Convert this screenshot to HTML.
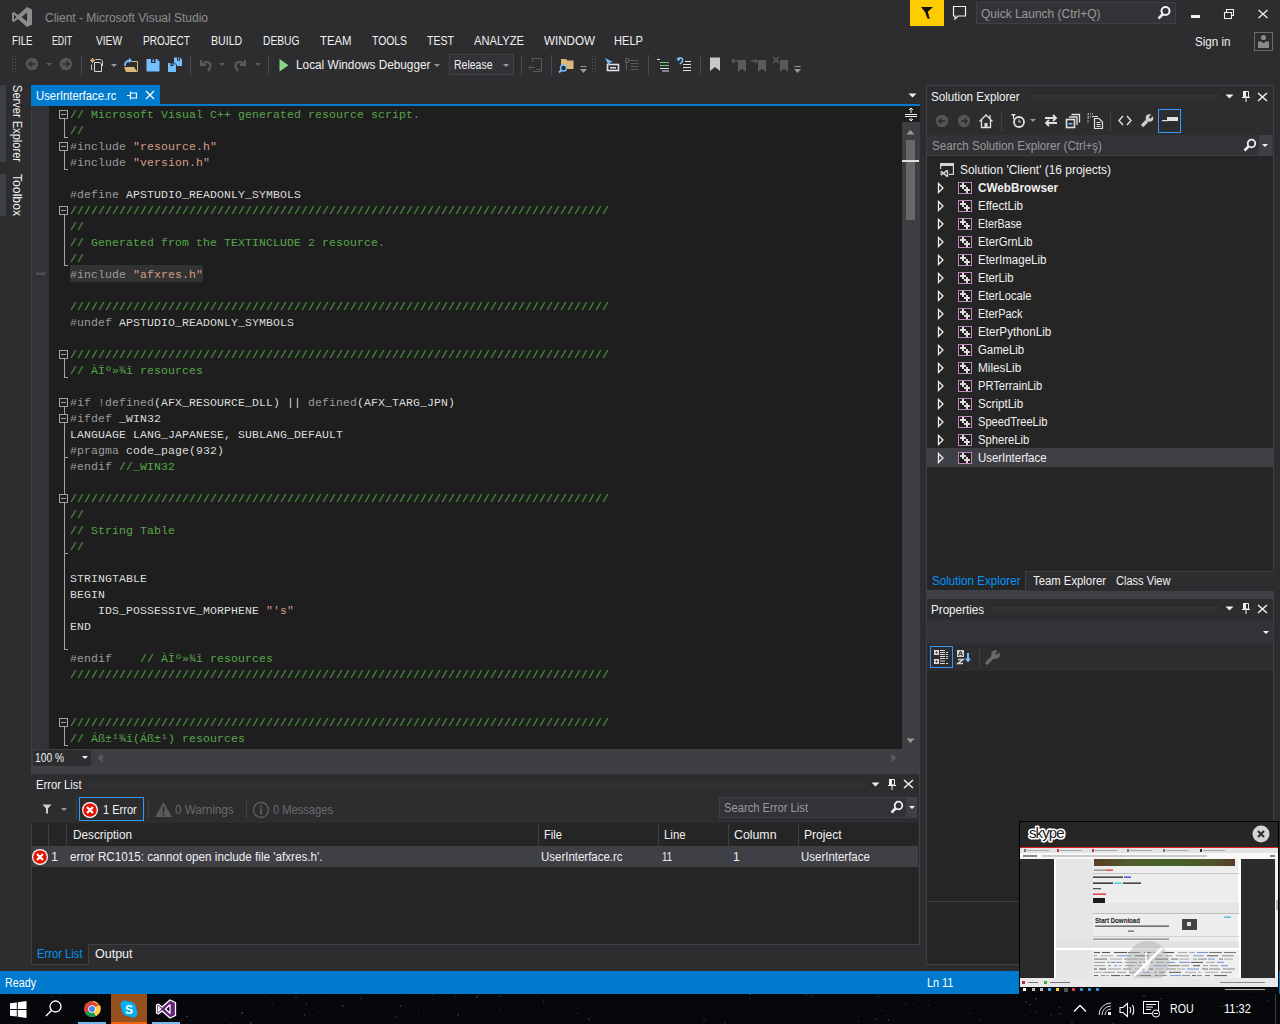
<!DOCTYPE html>
<html><head><meta charset="utf-8">
<style>
*{margin:0;padding:0;box-sizing:border-box}
html,body{width:1280px;height:1024px;overflow:hidden;background:#2d2d30;font-family:"Liberation Sans",sans-serif;font-size:12px;color:#f1f1f1;position:relative}
.a{position:absolute;display:block}
.t{position:absolute;white-space:pre;line-height:1;transform-origin:0 0}
.cl{position:absolute;left:70px;white-space:pre;font-family:"Liberation Mono",monospace;font-size:11.5px;letter-spacing:0.1px;line-height:16px;color:#dcdcdc;height:16px}
.c{color:#57a64a}.p{color:#9b9b9b}.s{color:#d69d85}
</style></head><body>
<svg class="a" style="left:11px;top:6px" width="22" height="22" viewBox="0 0 22 22"><path d="M16 1 L21 3.5 V18.5 L16 21 L7 13 L3 16 L1 15 V7 L3 6 L7 9 Z M16 6.5 L10.5 11 L16 15.5 Z M3 8.5 V13.5 L5.5 11 Z" fill="#8c8c8c" fill-rule="evenodd"/></svg>
<div class="t" style="left:44.50px;top:11.84px;font-size:12px;color:#8e8e8e;transform:scaleX(0.9989)">Client - Microsoft Visual Studio</div>
<div class="a" style="left:910px;top:0px;width:34px;height:26px;background:#ffcc00"></div>
<svg class="a" style="left:918px;top:4px" width="18" height="18" viewBox="918 4 18 18"><path d="M921 7 H933 L927.8 11.8 L929.8 19 L927.3 18.3 L925.2 12.2 Z" fill="#111"/></svg>
<svg class="a" style="left:951px;top:5px" width="17" height="16" viewBox="0 0 17 16"><path d="M2.5 1.5 H14.5 V11 H7 L4 14 V11 H2.5 Z" fill="none" stroke="#f1f1f1" stroke-width="1.2"/></svg>
<div class="a" style="left:976px;top:2px;width:200px;height:22px;background:#333337;border:1px solid #3f3f46"></div>
<div class="t" style="left:981.00px;top:8.34px;font-size:12px;color:#999999;transform:scaleX(0.9983)">Quick Launch (Ctrl+Q)</div>
<svg class="a" style="left:1156px;top:5px" width="16" height="16" viewBox="0 0 16 16"><circle cx="9.5" cy="6" r="4" fill="none" stroke="#f1f1f1" stroke-width="2"/><path d="M7 9 L2.5 13.5" stroke="#f1f1f1" stroke-width="2.5"/></svg>
<div class="a" style="left:1191px;top:15px;width:9px;height:3px;background:#f1f1f1"></div>
<svg class="a" style="left:1222px;top:7px" width="14" height="14" viewBox="1222 7 14 14"><path d="M1224.5 12.5 H1231.5 V18.5 H1224.5 Z M1226.5 12.5 V9.5 H1233.5 V15.5 H1231.5" fill="none" stroke="#f1f1f1" stroke-width="1.1"/></svg>
<svg class="a" style="left:1256px;top:8px" width="14" height="12" viewBox="1256 8 14 12"><path d="M1258.5 10 L1267.5 18 M1267.5 10 L1258.5 18" stroke="#f1f1f1" stroke-width="1.3"/></svg>
<div class="t" style="left:1195.00px;top:36.34px;font-size:12px;color:#f1f1f1;transform:scaleX(0.9675)">Sign in</div>
<svg class="a" style="left:1254px;top:32px" width="19" height="19" viewBox="1254 32 19 19"><rect x="1254.5" y="32.5" width="18" height="18" fill="none" stroke="#6b6b6b"/><circle cx="1263.5" cy="37.5" r="2.6" fill="#8a8a8a"/><path d="M1258 41.5 H1261.5 L1263.5 43.5 L1265.5 41.5 H1269 V48 H1258 Z" fill="#8a8a8a"/></svg>
<div class="t" style="left:11.50px;top:34.84px;font-size:12px;color:#f1f1f1;transform:scaleX(0.8089)">FILE</div>
<div class="t" style="left:52.00px;top:34.84px;font-size:12px;color:#f1f1f1;transform:scaleX(0.7317)">EDIT</div>
<div class="t" style="left:96.00px;top:34.84px;font-size:12px;color:#f1f1f1;transform:scaleX(0.8478)">VIEW</div>
<div class="t" style="left:143.00px;top:34.84px;font-size:12px;color:#f1f1f1;transform:scaleX(0.8392)">PROJECT</div>
<div class="t" style="left:211.30px;top:34.84px;font-size:12px;color:#f1f1f1;transform:scaleX(0.8827)">BUILD</div>
<div class="t" style="left:263.30px;top:34.84px;font-size:12px;color:#f1f1f1;transform:scaleX(0.8530)">DEBUG</div>
<div class="t" style="left:320.30px;top:34.84px;font-size:12px;color:#f1f1f1;transform:scaleX(0.9479)">TEAM</div>
<div class="t" style="left:372.00px;top:34.84px;font-size:12px;color:#f1f1f1;transform:scaleX(0.8651)">TOOLS</div>
<div class="t" style="left:427.00px;top:34.84px;font-size:12px;color:#f1f1f1;transform:scaleX(0.8804)">TEST</div>
<div class="t" style="left:474.00px;top:34.84px;font-size:12px;color:#f1f1f1;transform:scaleX(0.9294)">ANALYZE</div>
<div class="t" style="left:544.00px;top:34.84px;font-size:12px;color:#f1f1f1;transform:scaleX(0.9686)">WINDOW</div>
<div class="t" style="left:614.00px;top:34.84px;font-size:12px;color:#f1f1f1;transform:scaleX(0.9251)">HELP</div>
<svg class="a" style="left:12px;top:56px" width="4" height="18" viewBox="0 0 4 18"><rect x="0" y="0" width="1" height="1" fill="#555"/><rect x="0" y="3" width="1" height="1" fill="#555"/><rect x="0" y="6" width="1" height="1" fill="#555"/><rect x="0" y="9" width="1" height="1" fill="#555"/><rect x="0" y="12" width="1" height="1" fill="#555"/><rect x="0" y="15" width="1" height="1" fill="#555"/><rect x="3" y="0" width="1" height="1" fill="#555"/><rect x="3" y="3" width="1" height="1" fill="#555"/><rect x="3" y="6" width="1" height="1" fill="#555"/><rect x="3" y="9" width="1" height="1" fill="#555"/><rect x="3" y="12" width="1" height="1" fill="#555"/><rect x="3" y="15" width="1" height="1" fill="#555"/></svg>
<svg class="a" style="left:24px;top:56px" width="18" height="18" viewBox="0 0 18 18"><circle cx="8" cy="8" r="6.3" fill="#555558"/><path d="M11 8 H5 M7.5 5.5 L5 8 L7.5 10.5" stroke="#2d2d30" stroke-width="1.6" fill="none"/></svg>
<svg class="a" style="left:46px;top:63px" width="7" height="4" viewBox="0 0 7 4"><path d="M0 0 H6 L3 3 Z" fill="#5a5a5a"/></svg>
<svg class="a" style="left:58px;top:56px" width="18" height="18" viewBox="0 0 18 18"><circle cx="8" cy="8" r="6.3" fill="#555558"/><path d="M5 8 H11 M8.5 5.5 L11 8 L8.5 10.5" stroke="#2d2d30" stroke-width="1.6" fill="none"/></svg>
<div class="a" style="left:81px;top:55px;width:1px;height:20px;background:#4a4a4f"></div>
<svg class="a" style="left:88px;top:56px" width="17" height="18" viewBox="88 56 17 18"><path d="M95.5 59.5 H101 L102.5 61 V66" fill="none" stroke="#c8c8c8"/><path d="M94.5 62.5 H100 L101.5 64 V71.5 H94.5 Z" fill="#2d2d30" stroke="#d8d8d8"/><path d="M91.5 64.5 V69.5 H92.5" fill="none" stroke="#c8c8c8"/><path d="M92.5 58 V63 M90 60.5 H95 M90.7 58.7 L94.3 62.3 M94.3 58.7 L90.7 62.3" stroke="#e8b06b" stroke-width="0.9"/></svg>
<svg class="a" style="left:111px;top:64px" width="7" height="4" viewBox="0 0 7 4"><path d="M0 0 H6 L3 3 Z" fill="#999"/></svg>
<svg class="a" style="left:123px;top:57px" width="17" height="17" viewBox="123 57 17 17"><path d="M131.5 61.5 H137.5 V71.5" fill="none" stroke="#dcb67a"/><path d="M124 67 H134 L137.5 72 H126 Z" fill="#dcb67a"/><path d="M125 66 V65 Q125 61 130 60.5" fill="none" stroke="#75beff" stroke-width="1.8"/><path d="M129 57.8 L132 60.5 L129 63.2 Z" fill="#75beff"/></svg>
<svg class="a" style="left:146px;top:58px" width="14" height="14" viewBox="146 58 14 14"><path d="M146.5 59 H157 L159.5 61.5 V71.5 H146.5 Z" fill="#75beff"/><rect x="151" y="59" width="4.5" height="4" fill="#2d2d30"/><rect x="152.5" y="59.5" width="1.5" height="2.5" fill="#75beff"/></svg>
<svg class="a" style="left:167px;top:57px" width="16" height="16" viewBox="167 57 16 16"><path d="M174 57.5 H180 L182 59.5 V66 H174 Z" fill="#75beff"/><rect x="177" y="57.5" width="3" height="3" fill="#2d2d30"/><rect x="178" y="58" width="1" height="1.5" fill="#75beff"/><path d="M167.5 62.5 H174 L176.5 65 V72.5 H167.5 Z" fill="#75beff" stroke="#2d2d30" stroke-width="1"/><rect x="170.5" y="63" width="3" height="3" fill="#2d2d30"/><rect x="171.5" y="63.5" width="1" height="1.5" fill="#75beff"/></svg>
<div class="a" style="left:190px;top:55px;width:1px;height:20px;background:#4a4a4f"></div>
<svg class="a" style="left:197px;top:57px" width="16" height="16" viewBox="0 0 16 16"><path d="M4 3 V8 H9" fill="none" stroke="#5a5a5a" stroke-width="2"/><path d="M5 7.5 Q9 3 12.5 6 Q15 9 11 14" fill="none" stroke="#5a5a5a" stroke-width="2.2"/></svg>
<svg class="a" style="left:219px;top:63px" width="7" height="4" viewBox="0 0 7 4"><path d="M0 0 H6 L3 3 Z" fill="#5a5a5a"/></svg>
<svg class="a" style="left:233px;top:57px" width="16" height="16" viewBox="0 0 16 16"><path d="M12 3 V8 H7" fill="none" stroke="#5a5a5a" stroke-width="2"/><path d="M11 7.5 Q7 3 3.5 6 Q1 9 5 14" fill="none" stroke="#5a5a5a" stroke-width="2.2"/></svg>
<svg class="a" style="left:255px;top:63px" width="7" height="4" viewBox="0 0 7 4"><path d="M0 0 H6 L3 3 Z" fill="#5a5a5a"/></svg>
<div class="a" style="left:268px;top:55px;width:1px;height:20px;background:#4a4a4f"></div>
<svg class="a" style="left:279px;top:59px" width="10" height="13" viewBox="0 0 10 13"><path d="M0.5 0 L9.5 6.2 L0.5 12.5 Z" fill="#8cd68a"/></svg>
<div class="t" style="left:296.40px;top:59.14px;font-size:12px;color:#f1f1f1;transform:scaleX(0.9836)">Local Windows Debugger</div>
<svg class="a" style="left:434px;top:64px" width="7" height="4" viewBox="0 0 7 4"><path d="M0 0 H6 L3 3 Z" fill="#999"/></svg>
<div class="a" style="left:449px;top:54px;width:65px;height:21px;background:#333337;border:1px solid #434346"></div>
<div class="t" style="left:453.50px;top:59.14px;font-size:12px;color:#f1f1f1;transform:scaleX(0.8744)">Release</div>
<svg class="a" style="left:503px;top:64px" width="7" height="4" viewBox="0 0 7 4"><path d="M0 0 H6 L3 3 Z" fill="#999"/></svg>
<div class="a" style="left:521px;top:55px;width:1px;height:20px;background:#4a4a4f"></div>
<svg class="a" style="left:528px;top:57px" width="15" height="16" viewBox="0 0 15 16"><path d="M4.5 1.5 H13.5 V14.5 H4.5 M4.5 1.5 V5" fill="none" stroke="#5a5a5a"/><path d="M1 10.5 H7 M3 8.5 L1 10.5 L3 12.5 M8 12.5 H12" stroke="#5a5a5a" fill="none"/></svg>
<div class="a" style="left:551px;top:55px;width:1px;height:20px;background:#4a4a4f"></div>
<svg class="a" style="left:558px;top:57px" width="17" height="17" viewBox="0 0 17 17"><path d="M3 2 H8 L9.5 3.5 H15.5 V12 H3 Z" fill="#dcb67a"/><circle cx="5.5" cy="11" r="3" fill="#2d2d30" stroke="#75beff" stroke-width="1.4"/><path d="M3.5 13 L1 15.5" stroke="#75beff" stroke-width="1.8"/></svg>
<svg class="a" style="left:580px;top:66px" width="8" height="9" viewBox="0 0 8 9"><path d="M0.5 0.5 H6.5" stroke="#999"/><path d="M0 3 H7 L3.5 7 Z" fill="#999"/></svg>
<svg class="a" style="left:592px;top:56px" width="4" height="18" viewBox="0 0 4 18"><rect x="0" y="0" width="1" height="1" fill="#555"/><rect x="0" y="3" width="1" height="1" fill="#555"/><rect x="0" y="6" width="1" height="1" fill="#555"/><rect x="0" y="9" width="1" height="1" fill="#555"/><rect x="0" y="12" width="1" height="1" fill="#555"/><rect x="0" y="15" width="1" height="1" fill="#555"/><rect x="3" y="0" width="1" height="1" fill="#555"/><rect x="3" y="3" width="1" height="1" fill="#555"/><rect x="3" y="6" width="1" height="1" fill="#555"/><rect x="3" y="9" width="1" height="1" fill="#555"/><rect x="3" y="12" width="1" height="1" fill="#555"/><rect x="3" y="15" width="1" height="1" fill="#555"/></svg>
<svg class="a" style="left:604px;top:57px" width="16" height="16" viewBox="0 0 16 16"><rect x="3.5" y="7.5" width="11" height="6" fill="none" stroke="#e0e0e0" stroke-width="1.6"/><rect x="6" y="10" width="6" height="1.5" fill="#e0e0e0"/><path d="M1 1 L5 9 L6 5.5 L9 5 Z" fill="#75beff"/></svg>
<svg class="a" style="left:625px;top:57px" width="16" height="16" viewBox="0 0 16 16"><path d="M3.5 3.5 H13.5 M5.5 6.5 H13.5 M5.5 9.5 H13.5 M5.5 12.5 H13.5 M1.5 3.5 V13.5" stroke="#5a5a5a" fill="none"/><rect x="0.5" y="1.5" width="3" height="4" fill="none" stroke="#5a5a5a"/></svg>
<div class="a" style="left:648px;top:55px;width:1px;height:20px;background:#4a4a4f"></div>
<svg class="a" style="left:656px;top:57px" width="14" height="15" viewBox="0 0 14 15"><path d="M1 2.5 H4 M4 5.5 H13 M4 8.5 H13 M4 11.5 H13 M6 14 H13" stroke="#e0e0e0" fill="none"/><path d="M5 5.5 H13 M5 8.5 H13" stroke="#6cc466" fill="none"/></svg>
<svg class="a" style="left:676px;top:57px" width="17" height="16" viewBox="0 0 17 16"><path d="M2 3 Q2 0.5 5 1 Q7.5 1.5 6 5 L4 7" fill="none" stroke="#75beff" stroke-width="1.6"/><path d="M1 1 L2.5 4 L4 1" fill="#75beff" stroke="#75beff"/><path d="M7 7.5 H15 M7 10.5 H15 M7 13.5 H15 M9 4.5 H15" stroke="#e0e0e0" fill="none"/></svg>
<div class="a" style="left:700px;top:55px;width:1px;height:20px;background:#4a4a4f"></div>
<svg class="a" style="left:709px;top:57px" width="12" height="15" viewBox="0 0 12 15"><path d="M1 0.5 H11 V14 L6 10 L1 14 Z" fill="#c8c8c8"/></svg>
<svg class="a" style="left:731px;top:57px" width="17" height="16" viewBox="0 0 17 16"><path d="M7 3 H15 V15 L11 11.5 L7 15 Z" fill="#5a5a5a"/><path d="M1 4 H7 M3 2 L1 4 L3 6" stroke="#5a5a5a" fill="none" stroke-width="1.4"/></svg>
<svg class="a" style="left:751px;top:57px" width="17" height="16" viewBox="0 0 17 16"><path d="M7 3 H15 V15 L11 11.5 L7 15 Z" fill="#5a5a5a"/><path d="M0 4 H6 M4 2 L6 4 L4 6" stroke="#5a5a5a" fill="none" stroke-width="1.4"/></svg>
<svg class="a" style="left:772px;top:56px" width="18" height="17" viewBox="0 0 18 17"><path d="M8 4 H16 V16 L12 12.5 L8 16 Z" fill="#5a5a5a"/><path d="M1 1 L7 7 M7 1 L1 7" stroke="#5a5a5a" stroke-width="1.4"/></svg>
<svg class="a" style="left:794px;top:66px" width="8" height="9" viewBox="0 0 8 9"><path d="M0.5 0.5 H6.5" stroke="#999"/><path d="M0 3 H7 L3.5 7 Z" fill="#999"/></svg>
<div class="a" style="left:0px;top:85px;width:6px;height:77px;background:#3f3f46"></div>
<div class="a" style="left:0px;top:174px;width:6px;height:42px;background:#3f3f46"></div>
<div class="t" style="left:11px;top:85px;font-size:12px;color:#f1f1f1;transform-origin:0 0;transform:translate(12px,0) rotate(90deg) scaleX(0.9236)">Server Explorer</div>
<div class="t" style="left:11px;top:174px;font-size:12px;color:#f1f1f1;transform-origin:0 0;transform:translate(12px,0) rotate(90deg) scaleX(1.0154)">Toolbox</div>
<div class="a" style="left:31px;top:85px;width:129px;height:19px;background:#007acc"></div>
<div class="t" style="left:36.00px;top:89.84px;font-size:12px;color:#ffffff;transform:scaleX(0.9431)">UserInterface.rc</div>
<svg class="a" style="left:126px;top:89px" width="12" height="12" viewBox="0 0 12 12"><path d="M1 6.5 H4.5 M4.5 2.5 V10.5" fill="none" stroke="#fff" stroke-width="1.2"/><path d="M4.5 4 H10.5 V9 H4.5" fill="none" stroke="#fff" stroke-width="1.2"/></svg>
<svg class="a" style="left:145px;top:90px" width="10" height="10" viewBox="0 0 10 10"><path d="M1 1 L9 9 M9 1 L1 9" stroke="#fff" stroke-width="1.3"/></svg>
<div class="a" style="left:31px;top:104px;width:889px;height:2px;background:#007acc"></div>
<svg class="a" style="left:908px;top:93px" width="10" height="6" viewBox="0 0 10 6"><path d="M0.5 0.5 H8.5 L4.5 4.5 Z" fill="#f1f1f1"/></svg>
<div class="a" style="left:31px;top:106px;width:18px;height:643px;background:#333337"></div>
<div class="a" style="left:31px;top:106px;width:1px;height:643px;background:#3a3a40"></div>
<div class="a" style="left:49px;top:106px;width:853px;height:643px;background:#1e1e1e"></div>
<div class="a" style="left:902px;top:106px;width:18px;height:643px;background:#3e3e42"></div>
<div class="a" style="left:31px;top:749px;width:889px;height:17px;background:#3e3e42"></div>
<div class="a" style="left:31px;top:766px;width:889px;height:8px;background:#3f3f46"></div>
<div class="a" style="left:70px;top:265px;width:133px;height:17px;background:#333333"></div>
<div class="cl" style="top:106.6px"><span class="c">// Microsoft Visual C++ generated resource script.</span></div>
<div class="cl" style="top:122.6px"><span class="c">//</span></div>
<div class="cl" style="top:138.6px"><span class="p">#include </span><span class="s">"resource.h"</span></div>
<div class="cl" style="top:154.6px"><span class="p">#include </span><span class="s">"version.h"</span></div>
<div class="cl" style="top:186.6px"><span class="p">#define </span>APSTUDIO_READONLY_SYMBOLS</div>
<div class="cl" style="top:202.6px"><span class="c">/////////////////////////////////////////////////////////////////////////////</span></div>
<div class="cl" style="top:218.6px"><span class="c">//</span></div>
<div class="cl" style="top:234.6px"><span class="c">// Generated from the TEXTINCLUDE 2 resource.</span></div>
<div class="cl" style="top:250.6px"><span class="c">//</span></div>
<div class="cl" style="top:266.6px"><span class="p">#include </span><span class="s">"afxres.h"</span></div>
<div class="cl" style="top:298.6px"><span class="c">/////////////////////////////////////////////////////////////////////////////</span></div>
<div class="cl" style="top:314.6px"><span class="p">#undef </span>APSTUDIO_READONLY_SYMBOLS</div>
<div class="cl" style="top:346.6px"><span class="c">/////////////////////////////////////////////////////////////////////////////</span></div>
<div class="cl" style="top:362.6px"><span class="c">// ÀÏº»¾î resources</span></div>
<div class="cl" style="top:394.6px"><span class="p">#if !defined</span>(AFX_RESOURCE_DLL) || <span class="p">defined</span>(AFX_TARG_JPN)</div>
<div class="cl" style="top:410.6px"><span class="p">#ifdef </span>_WIN32</div>
<div class="cl" style="top:426.6px">LANGUAGE LANG_JAPANESE, SUBLANG_DEFAULT</div>
<div class="cl" style="top:442.6px"><span class="p">#pragma </span>code_page(932)</div>
<div class="cl" style="top:458.6px"><span class="p">#endif </span><span class="c">//_WIN32</span></div>
<div class="cl" style="top:490.6px"><span class="c">/////////////////////////////////////////////////////////////////////////////</span></div>
<div class="cl" style="top:506.6px"><span class="c">//</span></div>
<div class="cl" style="top:522.6px"><span class="c">// String Table</span></div>
<div class="cl" style="top:538.6px"><span class="c">//</span></div>
<div class="cl" style="top:570.6px">STRINGTABLE</div>
<div class="cl" style="top:586.6px">BEGIN</div>
<div class="cl" style="top:602.6px">    IDS_POSSESSIVE_MORPHENE <span class="s">"'s"</span></div>
<div class="cl" style="top:618.6px">END</div>
<div class="cl" style="top:650.6px"><span class="p">#endif    </span><span class="c">// ÀÏº»¾î resources</span></div>
<div class="cl" style="top:666.6px"><span class="c">/////////////////////////////////////////////////////////////////////////////</span></div>
<div class="cl" style="top:714.6px"><span class="c">/////////////////////////////////////////////////////////////////////////////</span></div>
<div class="cl" style="top:730.6px"><span class="c">// Áß±¹¾î(Áß±¹) resources</span></div>
<svg class="a" style="left:0;top:0" width="1280" height="1024"><path d="M64.5 119 V137" stroke="#a5a5a5"/><path d="M64 137.5 H68" stroke="#a5a5a5"/><path d="M64.5 151 V169" stroke="#a5a5a5"/><path d="M64 169.5 H68" stroke="#a5a5a5"/><path d="M64.5 215 V265" stroke="#a5a5a5"/><path d="M64 265.5 H68" stroke="#a5a5a5"/><path d="M64.5 359 V377" stroke="#a5a5a5"/><path d="M64 377.5 H68" stroke="#a5a5a5"/><path d="M64.5 407 V649" stroke="#a5a5a5"/><path d="M64 649.5 H68" stroke="#a5a5a5"/><path d="M64.5 423 V457" stroke="#a5a5a5"/><path d="M64 457.5 H68" stroke="#a5a5a5"/><path d="M64.5 503 V553" stroke="#a5a5a5"/><path d="M64 553.5 H68" stroke="#a5a5a5"/><path d="M64.5 727 V745" stroke="#a5a5a5"/><path d="M64 745.5 H68" stroke="#a5a5a5"/><rect x="59.5" y="110.5" width="8" height="8" fill="#1e1e1e" stroke="#a5a5a5"/><path d="M61 114.5 H66" stroke="#a5a5a5"/><rect x="59.5" y="142.5" width="8" height="8" fill="#1e1e1e" stroke="#a5a5a5"/><path d="M61 146.5 H66" stroke="#a5a5a5"/><rect x="59.5" y="206.5" width="8" height="8" fill="#1e1e1e" stroke="#a5a5a5"/><path d="M61 210.5 H66" stroke="#a5a5a5"/><rect x="59.5" y="350.5" width="8" height="8" fill="#1e1e1e" stroke="#a5a5a5"/><path d="M61 354.5 H66" stroke="#a5a5a5"/><rect x="59.5" y="398.5" width="8" height="8" fill="#1e1e1e" stroke="#a5a5a5"/><path d="M61 402.5 H66" stroke="#a5a5a5"/><rect x="59.5" y="414.5" width="8" height="8" fill="#1e1e1e" stroke="#a5a5a5"/><path d="M61 418.5 H66" stroke="#a5a5a5"/><rect x="59.5" y="494.5" width="8" height="8" fill="#1e1e1e" stroke="#a5a5a5"/><path d="M61 498.5 H66" stroke="#a5a5a5"/><rect x="59.5" y="718.5" width="8" height="8" fill="#1e1e1e" stroke="#a5a5a5"/><path d="M61 722.5 H66" stroke="#a5a5a5"/></svg>
<svg class="a" style="left:35px;top:270px" width="12" height="8" viewBox="35 270 12 8"><path d="M36 272.5 H43 V271 L46 273.8 L43 276.5 V275 H36 Z" fill="#4e4e52"/></svg>
<div class="a" style="left:902px;top:106px;width:18px;height:16px;background:#1e1e1e"></div>
<svg class="a" style="left:903px;top:107px" width="16" height="15" viewBox="0 0 16 15"><path d="M2 7.5 H14 M2 9.5 H14" stroke="#f1f1f1"/><path d="M8 1 V6 M8 11 V14 M6 3 L8 1 L10 3 M6 12 L8 14 L10 12" stroke="#f1f1f1" fill="none"/></svg>
<svg class="a" style="left:906px;top:129px" width="10" height="6" viewBox="0 0 10 6"><path d="M0.5 5.5 L4.5 1 L8.5 5.5 Z" fill="#999"/></svg>
<div class="a" style="left:906px;top:140px;width:9px;height:80px;background:#686868"></div>
<div class="a" style="left:902px;top:160px;width:17px;height:2px;background:#e0e0e0"></div>
<svg class="a" style="left:906px;top:738px" width="10" height="6" viewBox="0 0 10 6"><path d="M0.5 0.5 L4.5 5 L8.5 0.5 Z" fill="#999"/></svg>
<div class="a" style="left:33px;top:750px;width:58px;height:16px;background:#2d2d30"></div>
<div class="t" style="left:35.00px;top:751.84px;font-size:12px;color:#f1f1f1;transform:scaleX(0.8523)">100 %</div>
<svg class="a" style="left:82px;top:756px" width="7" height="4" viewBox="0 0 7 4"><path d="M0 0 H6 L3 3 Z" fill="#f1f1f1"/></svg>
<svg class="a" style="left:97px;top:753px" width="6" height="10" viewBox="0 0 6 10"><path d="M5.5 0.5 V9.5 L0.5 5 Z" fill="#5a5a5a"/></svg>
<svg class="a" style="left:891px;top:753px" width="6" height="10" viewBox="0 0 6 10"><path d="M0.5 0.5 V9.5 L5.5 5 Z" fill="#5a5a5a"/></svg>
<div class="a" style="left:31px;top:774px;width:889px;height:197px;background:#2d2d30"></div>
<div class="t" style="left:36.30px;top:778.54px;font-size:12px;color:#f1f1f1;transform:scaleX(0.9348)">Error List</div>
<svg class="a" style="left:90px;top:782px" width="776" height="5" viewBox="0 0 776 5"><rect x="0" y="0" width="1" height="1" fill="#4a4a4e"/><rect x="2" y="2" width="1" height="1" fill="#4a4a4e"/><rect x="0" y="4" width="1" height="1" fill="#4a4a4e"/><rect x="4" y="0" width="1" height="1" fill="#4a4a4e"/><rect x="6" y="2" width="1" height="1" fill="#4a4a4e"/><rect x="4" y="4" width="1" height="1" fill="#4a4a4e"/><rect x="8" y="0" width="1" height="1" fill="#4a4a4e"/><rect x="10" y="2" width="1" height="1" fill="#4a4a4e"/><rect x="8" y="4" width="1" height="1" fill="#4a4a4e"/><rect x="12" y="0" width="1" height="1" fill="#4a4a4e"/><rect x="14" y="2" width="1" height="1" fill="#4a4a4e"/><rect x="12" y="4" width="1" height="1" fill="#4a4a4e"/><rect x="16" y="0" width="1" height="1" fill="#4a4a4e"/><rect x="18" y="2" width="1" height="1" fill="#4a4a4e"/><rect x="16" y="4" width="1" height="1" fill="#4a4a4e"/><rect x="20" y="0" width="1" height="1" fill="#4a4a4e"/><rect x="22" y="2" width="1" height="1" fill="#4a4a4e"/><rect x="20" y="4" width="1" height="1" fill="#4a4a4e"/><rect x="24" y="0" width="1" height="1" fill="#4a4a4e"/><rect x="26" y="2" width="1" height="1" fill="#4a4a4e"/><rect x="24" y="4" width="1" height="1" fill="#4a4a4e"/><rect x="28" y="0" width="1" height="1" fill="#4a4a4e"/><rect x="30" y="2" width="1" height="1" fill="#4a4a4e"/><rect x="28" y="4" width="1" height="1" fill="#4a4a4e"/><rect x="32" y="0" width="1" height="1" fill="#4a4a4e"/><rect x="34" y="2" width="1" height="1" fill="#4a4a4e"/><rect x="32" y="4" width="1" height="1" fill="#4a4a4e"/><rect x="36" y="0" width="1" height="1" fill="#4a4a4e"/><rect x="38" y="2" width="1" height="1" fill="#4a4a4e"/><rect x="36" y="4" width="1" height="1" fill="#4a4a4e"/><rect x="40" y="0" width="1" height="1" fill="#4a4a4e"/><rect x="42" y="2" width="1" height="1" fill="#4a4a4e"/><rect x="40" y="4" width="1" height="1" fill="#4a4a4e"/><rect x="44" y="0" width="1" height="1" fill="#4a4a4e"/><rect x="46" y="2" width="1" height="1" fill="#4a4a4e"/><rect x="44" y="4" width="1" height="1" fill="#4a4a4e"/><rect x="48" y="0" width="1" height="1" fill="#4a4a4e"/><rect x="50" y="2" width="1" height="1" fill="#4a4a4e"/><rect x="48" y="4" width="1" height="1" fill="#4a4a4e"/><rect x="52" y="0" width="1" height="1" fill="#4a4a4e"/><rect x="54" y="2" width="1" height="1" fill="#4a4a4e"/><rect x="52" y="4" width="1" height="1" fill="#4a4a4e"/><rect x="56" y="0" width="1" height="1" fill="#4a4a4e"/><rect x="58" y="2" width="1" height="1" fill="#4a4a4e"/><rect x="56" y="4" width="1" height="1" fill="#4a4a4e"/><rect x="60" y="0" width="1" height="1" fill="#4a4a4e"/><rect x="62" y="2" width="1" height="1" fill="#4a4a4e"/><rect x="60" y="4" width="1" height="1" fill="#4a4a4e"/><rect x="64" y="0" width="1" height="1" fill="#4a4a4e"/><rect x="66" y="2" width="1" height="1" fill="#4a4a4e"/><rect x="64" y="4" width="1" height="1" fill="#4a4a4e"/><rect x="68" y="0" width="1" height="1" fill="#4a4a4e"/><rect x="70" y="2" width="1" height="1" fill="#4a4a4e"/><rect x="68" y="4" width="1" height="1" fill="#4a4a4e"/><rect x="72" y="0" width="1" height="1" fill="#4a4a4e"/><rect x="74" y="2" width="1" height="1" fill="#4a4a4e"/><rect x="72" y="4" width="1" height="1" fill="#4a4a4e"/><rect x="76" y="0" width="1" height="1" fill="#4a4a4e"/><rect x="78" y="2" width="1" height="1" fill="#4a4a4e"/><rect x="76" y="4" width="1" height="1" fill="#4a4a4e"/><rect x="80" y="0" width="1" height="1" fill="#4a4a4e"/><rect x="82" y="2" width="1" height="1" fill="#4a4a4e"/><rect x="80" y="4" width="1" height="1" fill="#4a4a4e"/><rect x="84" y="0" width="1" height="1" fill="#4a4a4e"/><rect x="86" y="2" width="1" height="1" fill="#4a4a4e"/><rect x="84" y="4" width="1" height="1" fill="#4a4a4e"/><rect x="88" y="0" width="1" height="1" fill="#4a4a4e"/><rect x="90" y="2" width="1" height="1" fill="#4a4a4e"/><rect x="88" y="4" width="1" height="1" fill="#4a4a4e"/><rect x="92" y="0" width="1" height="1" fill="#4a4a4e"/><rect x="94" y="2" width="1" height="1" fill="#4a4a4e"/><rect x="92" y="4" width="1" height="1" fill="#4a4a4e"/><rect x="96" y="0" width="1" height="1" fill="#4a4a4e"/><rect x="98" y="2" width="1" height="1" fill="#4a4a4e"/><rect x="96" y="4" width="1" height="1" fill="#4a4a4e"/><rect x="100" y="0" width="1" height="1" fill="#4a4a4e"/><rect x="102" y="2" width="1" height="1" fill="#4a4a4e"/><rect x="100" y="4" width="1" height="1" fill="#4a4a4e"/><rect x="104" y="0" width="1" height="1" fill="#4a4a4e"/><rect x="106" y="2" width="1" height="1" fill="#4a4a4e"/><rect x="104" y="4" width="1" height="1" fill="#4a4a4e"/><rect x="108" y="0" width="1" height="1" fill="#4a4a4e"/><rect x="110" y="2" width="1" height="1" fill="#4a4a4e"/><rect x="108" y="4" width="1" height="1" fill="#4a4a4e"/><rect x="112" y="0" width="1" height="1" fill="#4a4a4e"/><rect x="114" y="2" width="1" height="1" fill="#4a4a4e"/><rect x="112" y="4" width="1" height="1" fill="#4a4a4e"/><rect x="116" y="0" width="1" height="1" fill="#4a4a4e"/><rect x="118" y="2" width="1" height="1" fill="#4a4a4e"/><rect x="116" y="4" width="1" height="1" fill="#4a4a4e"/><rect x="120" y="0" width="1" height="1" fill="#4a4a4e"/><rect x="122" y="2" width="1" height="1" fill="#4a4a4e"/><rect x="120" y="4" width="1" height="1" fill="#4a4a4e"/><rect x="124" y="0" width="1" height="1" fill="#4a4a4e"/><rect x="126" y="2" width="1" height="1" fill="#4a4a4e"/><rect x="124" y="4" width="1" height="1" fill="#4a4a4e"/><rect x="128" y="0" width="1" height="1" fill="#4a4a4e"/><rect x="130" y="2" width="1" height="1" fill="#4a4a4e"/><rect x="128" y="4" width="1" height="1" fill="#4a4a4e"/><rect x="132" y="0" width="1" height="1" fill="#4a4a4e"/><rect x="134" y="2" width="1" height="1" fill="#4a4a4e"/><rect x="132" y="4" width="1" height="1" fill="#4a4a4e"/><rect x="136" y="0" width="1" height="1" fill="#4a4a4e"/><rect x="138" y="2" width="1" height="1" fill="#4a4a4e"/><rect x="136" y="4" width="1" height="1" fill="#4a4a4e"/><rect x="140" y="0" width="1" height="1" fill="#4a4a4e"/><rect x="142" y="2" width="1" height="1" fill="#4a4a4e"/><rect x="140" y="4" width="1" height="1" fill="#4a4a4e"/><rect x="144" y="0" width="1" height="1" fill="#4a4a4e"/><rect x="146" y="2" width="1" height="1" fill="#4a4a4e"/><rect x="144" y="4" width="1" height="1" fill="#4a4a4e"/><rect x="148" y="0" width="1" height="1" fill="#4a4a4e"/><rect x="150" y="2" width="1" height="1" fill="#4a4a4e"/><rect x="148" y="4" width="1" height="1" fill="#4a4a4e"/><rect x="152" y="0" width="1" height="1" fill="#4a4a4e"/><rect x="154" y="2" width="1" height="1" fill="#4a4a4e"/><rect x="152" y="4" width="1" height="1" fill="#4a4a4e"/><rect x="156" y="0" width="1" height="1" fill="#4a4a4e"/><rect x="158" y="2" width="1" height="1" fill="#4a4a4e"/><rect x="156" y="4" width="1" height="1" fill="#4a4a4e"/><rect x="160" y="0" width="1" height="1" fill="#4a4a4e"/><rect x="162" y="2" width="1" height="1" fill="#4a4a4e"/><rect x="160" y="4" width="1" height="1" fill="#4a4a4e"/><rect x="164" y="0" width="1" height="1" fill="#4a4a4e"/><rect x="166" y="2" width="1" height="1" fill="#4a4a4e"/><rect x="164" y="4" width="1" height="1" fill="#4a4a4e"/><rect x="168" y="0" width="1" height="1" fill="#4a4a4e"/><rect x="170" y="2" width="1" height="1" fill="#4a4a4e"/><rect x="168" y="4" width="1" height="1" fill="#4a4a4e"/><rect x="172" y="0" width="1" height="1" fill="#4a4a4e"/><rect x="174" y="2" width="1" height="1" fill="#4a4a4e"/><rect x="172" y="4" width="1" height="1" fill="#4a4a4e"/><rect x="176" y="0" width="1" height="1" fill="#4a4a4e"/><rect x="178" y="2" width="1" height="1" fill="#4a4a4e"/><rect x="176" y="4" width="1" height="1" fill="#4a4a4e"/><rect x="180" y="0" width="1" height="1" fill="#4a4a4e"/><rect x="182" y="2" width="1" height="1" fill="#4a4a4e"/><rect x="180" y="4" width="1" height="1" fill="#4a4a4e"/><rect x="184" y="0" width="1" height="1" fill="#4a4a4e"/><rect x="186" y="2" width="1" height="1" fill="#4a4a4e"/><rect x="184" y="4" width="1" height="1" fill="#4a4a4e"/><rect x="188" y="0" width="1" height="1" fill="#4a4a4e"/><rect x="190" y="2" width="1" height="1" fill="#4a4a4e"/><rect x="188" y="4" width="1" height="1" fill="#4a4a4e"/><rect x="192" y="0" width="1" height="1" fill="#4a4a4e"/><rect x="194" y="2" width="1" height="1" fill="#4a4a4e"/><rect x="192" y="4" width="1" height="1" fill="#4a4a4e"/><rect x="196" y="0" width="1" height="1" fill="#4a4a4e"/><rect x="198" y="2" width="1" height="1" fill="#4a4a4e"/><rect x="196" y="4" width="1" height="1" fill="#4a4a4e"/><rect x="200" y="0" width="1" height="1" fill="#4a4a4e"/><rect x="202" y="2" width="1" height="1" fill="#4a4a4e"/><rect x="200" y="4" width="1" height="1" fill="#4a4a4e"/><rect x="204" y="0" width="1" height="1" fill="#4a4a4e"/><rect x="206" y="2" width="1" height="1" fill="#4a4a4e"/><rect x="204" y="4" width="1" height="1" fill="#4a4a4e"/><rect x="208" y="0" width="1" height="1" fill="#4a4a4e"/><rect x="210" y="2" width="1" height="1" fill="#4a4a4e"/><rect x="208" y="4" width="1" height="1" fill="#4a4a4e"/><rect x="212" y="0" width="1" height="1" fill="#4a4a4e"/><rect x="214" y="2" width="1" height="1" fill="#4a4a4e"/><rect x="212" y="4" width="1" height="1" fill="#4a4a4e"/><rect x="216" y="0" width="1" height="1" fill="#4a4a4e"/><rect x="218" y="2" width="1" height="1" fill="#4a4a4e"/><rect x="216" y="4" width="1" height="1" fill="#4a4a4e"/><rect x="220" y="0" width="1" height="1" fill="#4a4a4e"/><rect x="222" y="2" width="1" height="1" fill="#4a4a4e"/><rect x="220" y="4" width="1" height="1" fill="#4a4a4e"/><rect x="224" y="0" width="1" height="1" fill="#4a4a4e"/><rect x="226" y="2" width="1" height="1" fill="#4a4a4e"/><rect x="224" y="4" width="1" height="1" fill="#4a4a4e"/><rect x="228" y="0" width="1" height="1" fill="#4a4a4e"/><rect x="230" y="2" width="1" height="1" fill="#4a4a4e"/><rect x="228" y="4" width="1" height="1" fill="#4a4a4e"/><rect x="232" y="0" width="1" height="1" fill="#4a4a4e"/><rect x="234" y="2" width="1" height="1" fill="#4a4a4e"/><rect x="232" y="4" width="1" height="1" fill="#4a4a4e"/><rect x="236" y="0" width="1" height="1" fill="#4a4a4e"/><rect x="238" y="2" width="1" height="1" fill="#4a4a4e"/><rect x="236" y="4" width="1" height="1" fill="#4a4a4e"/><rect x="240" y="0" width="1" height="1" fill="#4a4a4e"/><rect x="242" y="2" width="1" height="1" fill="#4a4a4e"/><rect x="240" y="4" width="1" height="1" fill="#4a4a4e"/><rect x="244" y="0" width="1" height="1" fill="#4a4a4e"/><rect x="246" y="2" width="1" height="1" fill="#4a4a4e"/><rect x="244" y="4" width="1" height="1" fill="#4a4a4e"/><rect x="248" y="0" width="1" height="1" fill="#4a4a4e"/><rect x="250" y="2" width="1" height="1" fill="#4a4a4e"/><rect x="248" y="4" width="1" height="1" fill="#4a4a4e"/><rect x="252" y="0" width="1" height="1" fill="#4a4a4e"/><rect x="254" y="2" width="1" height="1" fill="#4a4a4e"/><rect x="252" y="4" width="1" height="1" fill="#4a4a4e"/><rect x="256" y="0" width="1" height="1" fill="#4a4a4e"/><rect x="258" y="2" width="1" height="1" fill="#4a4a4e"/><rect x="256" y="4" width="1" height="1" fill="#4a4a4e"/><rect x="260" y="0" width="1" height="1" fill="#4a4a4e"/><rect x="262" y="2" width="1" height="1" fill="#4a4a4e"/><rect x="260" y="4" width="1" height="1" fill="#4a4a4e"/><rect x="264" y="0" width="1" height="1" fill="#4a4a4e"/><rect x="266" y="2" width="1" height="1" fill="#4a4a4e"/><rect x="264" y="4" width="1" height="1" fill="#4a4a4e"/><rect x="268" y="0" width="1" height="1" fill="#4a4a4e"/><rect x="270" y="2" width="1" height="1" fill="#4a4a4e"/><rect x="268" y="4" width="1" height="1" fill="#4a4a4e"/><rect x="272" y="0" width="1" height="1" fill="#4a4a4e"/><rect x="274" y="2" width="1" height="1" fill="#4a4a4e"/><rect x="272" y="4" width="1" height="1" fill="#4a4a4e"/><rect x="276" y="0" width="1" height="1" fill="#4a4a4e"/><rect x="278" y="2" width="1" height="1" fill="#4a4a4e"/><rect x="276" y="4" width="1" height="1" fill="#4a4a4e"/><rect x="280" y="0" width="1" height="1" fill="#4a4a4e"/><rect x="282" y="2" width="1" height="1" fill="#4a4a4e"/><rect x="280" y="4" width="1" height="1" fill="#4a4a4e"/><rect x="284" y="0" width="1" height="1" fill="#4a4a4e"/><rect x="286" y="2" width="1" height="1" fill="#4a4a4e"/><rect x="284" y="4" width="1" height="1" fill="#4a4a4e"/><rect x="288" y="0" width="1" height="1" fill="#4a4a4e"/><rect x="290" y="2" width="1" height="1" fill="#4a4a4e"/><rect x="288" y="4" width="1" height="1" fill="#4a4a4e"/><rect x="292" y="0" width="1" height="1" fill="#4a4a4e"/><rect x="294" y="2" width="1" height="1" fill="#4a4a4e"/><rect x="292" y="4" width="1" height="1" fill="#4a4a4e"/><rect x="296" y="0" width="1" height="1" fill="#4a4a4e"/><rect x="298" y="2" width="1" height="1" fill="#4a4a4e"/><rect x="296" y="4" width="1" height="1" fill="#4a4a4e"/><rect x="300" y="0" width="1" height="1" fill="#4a4a4e"/><rect x="302" y="2" width="1" height="1" fill="#4a4a4e"/><rect x="300" y="4" width="1" height="1" fill="#4a4a4e"/><rect x="304" y="0" width="1" height="1" fill="#4a4a4e"/><rect x="306" y="2" width="1" height="1" fill="#4a4a4e"/><rect x="304" y="4" width="1" height="1" fill="#4a4a4e"/><rect x="308" y="0" width="1" height="1" fill="#4a4a4e"/><rect x="310" y="2" width="1" height="1" fill="#4a4a4e"/><rect x="308" y="4" width="1" height="1" fill="#4a4a4e"/><rect x="312" y="0" width="1" height="1" fill="#4a4a4e"/><rect x="314" y="2" width="1" height="1" fill="#4a4a4e"/><rect x="312" y="4" width="1" height="1" fill="#4a4a4e"/><rect x="316" y="0" width="1" height="1" fill="#4a4a4e"/><rect x="318" y="2" width="1" height="1" fill="#4a4a4e"/><rect x="316" y="4" width="1" height="1" fill="#4a4a4e"/><rect x="320" y="0" width="1" height="1" fill="#4a4a4e"/><rect x="322" y="2" width="1" height="1" fill="#4a4a4e"/><rect x="320" y="4" width="1" height="1" fill="#4a4a4e"/><rect x="324" y="0" width="1" height="1" fill="#4a4a4e"/><rect x="326" y="2" width="1" height="1" fill="#4a4a4e"/><rect x="324" y="4" width="1" height="1" fill="#4a4a4e"/><rect x="328" y="0" width="1" height="1" fill="#4a4a4e"/><rect x="330" y="2" width="1" height="1" fill="#4a4a4e"/><rect x="328" y="4" width="1" height="1" fill="#4a4a4e"/><rect x="332" y="0" width="1" height="1" fill="#4a4a4e"/><rect x="334" y="2" width="1" height="1" fill="#4a4a4e"/><rect x="332" y="4" width="1" height="1" fill="#4a4a4e"/><rect x="336" y="0" width="1" height="1" fill="#4a4a4e"/><rect x="338" y="2" width="1" height="1" fill="#4a4a4e"/><rect x="336" y="4" width="1" height="1" fill="#4a4a4e"/><rect x="340" y="0" width="1" height="1" fill="#4a4a4e"/><rect x="342" y="2" width="1" height="1" fill="#4a4a4e"/><rect x="340" y="4" width="1" height="1" fill="#4a4a4e"/><rect x="344" y="0" width="1" height="1" fill="#4a4a4e"/><rect x="346" y="2" width="1" height="1" fill="#4a4a4e"/><rect x="344" y="4" width="1" height="1" fill="#4a4a4e"/><rect x="348" y="0" width="1" height="1" fill="#4a4a4e"/><rect x="350" y="2" width="1" height="1" fill="#4a4a4e"/><rect x="348" y="4" width="1" height="1" fill="#4a4a4e"/><rect x="352" y="0" width="1" height="1" fill="#4a4a4e"/><rect x="354" y="2" width="1" height="1" fill="#4a4a4e"/><rect x="352" y="4" width="1" height="1" fill="#4a4a4e"/><rect x="356" y="0" width="1" height="1" fill="#4a4a4e"/><rect x="358" y="2" width="1" height="1" fill="#4a4a4e"/><rect x="356" y="4" width="1" height="1" fill="#4a4a4e"/><rect x="360" y="0" width="1" height="1" fill="#4a4a4e"/><rect x="362" y="2" width="1" height="1" fill="#4a4a4e"/><rect x="360" y="4" width="1" height="1" fill="#4a4a4e"/><rect x="364" y="0" width="1" height="1" fill="#4a4a4e"/><rect x="366" y="2" width="1" height="1" fill="#4a4a4e"/><rect x="364" y="4" width="1" height="1" fill="#4a4a4e"/><rect x="368" y="0" width="1" height="1" fill="#4a4a4e"/><rect x="370" y="2" width="1" height="1" fill="#4a4a4e"/><rect x="368" y="4" width="1" height="1" fill="#4a4a4e"/><rect x="372" y="0" width="1" height="1" fill="#4a4a4e"/><rect x="374" y="2" width="1" height="1" fill="#4a4a4e"/><rect x="372" y="4" width="1" height="1" fill="#4a4a4e"/><rect x="376" y="0" width="1" height="1" fill="#4a4a4e"/><rect x="378" y="2" width="1" height="1" fill="#4a4a4e"/><rect x="376" y="4" width="1" height="1" fill="#4a4a4e"/><rect x="380" y="0" width="1" height="1" fill="#4a4a4e"/><rect x="382" y="2" width="1" height="1" fill="#4a4a4e"/><rect x="380" y="4" width="1" height="1" fill="#4a4a4e"/><rect x="384" y="0" width="1" height="1" fill="#4a4a4e"/><rect x="386" y="2" width="1" height="1" fill="#4a4a4e"/><rect x="384" y="4" width="1" height="1" fill="#4a4a4e"/><rect x="388" y="0" width="1" height="1" fill="#4a4a4e"/><rect x="390" y="2" width="1" height="1" fill="#4a4a4e"/><rect x="388" y="4" width="1" height="1" fill="#4a4a4e"/><rect x="392" y="0" width="1" height="1" fill="#4a4a4e"/><rect x="394" y="2" width="1" height="1" fill="#4a4a4e"/><rect x="392" y="4" width="1" height="1" fill="#4a4a4e"/><rect x="396" y="0" width="1" height="1" fill="#4a4a4e"/><rect x="398" y="2" width="1" height="1" fill="#4a4a4e"/><rect x="396" y="4" width="1" height="1" fill="#4a4a4e"/><rect x="400" y="0" width="1" height="1" fill="#4a4a4e"/><rect x="402" y="2" width="1" height="1" fill="#4a4a4e"/><rect x="400" y="4" width="1" height="1" fill="#4a4a4e"/><rect x="404" y="0" width="1" height="1" fill="#4a4a4e"/><rect x="406" y="2" width="1" height="1" fill="#4a4a4e"/><rect x="404" y="4" width="1" height="1" fill="#4a4a4e"/><rect x="408" y="0" width="1" height="1" fill="#4a4a4e"/><rect x="410" y="2" width="1" height="1" fill="#4a4a4e"/><rect x="408" y="4" width="1" height="1" fill="#4a4a4e"/><rect x="412" y="0" width="1" height="1" fill="#4a4a4e"/><rect x="414" y="2" width="1" height="1" fill="#4a4a4e"/><rect x="412" y="4" width="1" height="1" fill="#4a4a4e"/><rect x="416" y="0" width="1" height="1" fill="#4a4a4e"/><rect x="418" y="2" width="1" height="1" fill="#4a4a4e"/><rect x="416" y="4" width="1" height="1" fill="#4a4a4e"/><rect x="420" y="0" width="1" height="1" fill="#4a4a4e"/><rect x="422" y="2" width="1" height="1" fill="#4a4a4e"/><rect x="420" y="4" width="1" height="1" fill="#4a4a4e"/><rect x="424" y="0" width="1" height="1" fill="#4a4a4e"/><rect x="426" y="2" width="1" height="1" fill="#4a4a4e"/><rect x="424" y="4" width="1" height="1" fill="#4a4a4e"/><rect x="428" y="0" width="1" height="1" fill="#4a4a4e"/><rect x="430" y="2" width="1" height="1" fill="#4a4a4e"/><rect x="428" y="4" width="1" height="1" fill="#4a4a4e"/><rect x="432" y="0" width="1" height="1" fill="#4a4a4e"/><rect x="434" y="2" width="1" height="1" fill="#4a4a4e"/><rect x="432" y="4" width="1" height="1" fill="#4a4a4e"/><rect x="436" y="0" width="1" height="1" fill="#4a4a4e"/><rect x="438" y="2" width="1" height="1" fill="#4a4a4e"/><rect x="436" y="4" width="1" height="1" fill="#4a4a4e"/><rect x="440" y="0" width="1" height="1" fill="#4a4a4e"/><rect x="442" y="2" width="1" height="1" fill="#4a4a4e"/><rect x="440" y="4" width="1" height="1" fill="#4a4a4e"/><rect x="444" y="0" width="1" height="1" fill="#4a4a4e"/><rect x="446" y="2" width="1" height="1" fill="#4a4a4e"/><rect x="444" y="4" width="1" height="1" fill="#4a4a4e"/><rect x="448" y="0" width="1" height="1" fill="#4a4a4e"/><rect x="450" y="2" width="1" height="1" fill="#4a4a4e"/><rect x="448" y="4" width="1" height="1" fill="#4a4a4e"/><rect x="452" y="0" width="1" height="1" fill="#4a4a4e"/><rect x="454" y="2" width="1" height="1" fill="#4a4a4e"/><rect x="452" y="4" width="1" height="1" fill="#4a4a4e"/><rect x="456" y="0" width="1" height="1" fill="#4a4a4e"/><rect x="458" y="2" width="1" height="1" fill="#4a4a4e"/><rect x="456" y="4" width="1" height="1" fill="#4a4a4e"/><rect x="460" y="0" width="1" height="1" fill="#4a4a4e"/><rect x="462" y="2" width="1" height="1" fill="#4a4a4e"/><rect x="460" y="4" width="1" height="1" fill="#4a4a4e"/><rect x="464" y="0" width="1" height="1" fill="#4a4a4e"/><rect x="466" y="2" width="1" height="1" fill="#4a4a4e"/><rect x="464" y="4" width="1" height="1" fill="#4a4a4e"/><rect x="468" y="0" width="1" height="1" fill="#4a4a4e"/><rect x="470" y="2" width="1" height="1" fill="#4a4a4e"/><rect x="468" y="4" width="1" height="1" fill="#4a4a4e"/><rect x="472" y="0" width="1" height="1" fill="#4a4a4e"/><rect x="474" y="2" width="1" height="1" fill="#4a4a4e"/><rect x="472" y="4" width="1" height="1" fill="#4a4a4e"/><rect x="476" y="0" width="1" height="1" fill="#4a4a4e"/><rect x="478" y="2" width="1" height="1" fill="#4a4a4e"/><rect x="476" y="4" width="1" height="1" fill="#4a4a4e"/><rect x="480" y="0" width="1" height="1" fill="#4a4a4e"/><rect x="482" y="2" width="1" height="1" fill="#4a4a4e"/><rect x="480" y="4" width="1" height="1" fill="#4a4a4e"/><rect x="484" y="0" width="1" height="1" fill="#4a4a4e"/><rect x="486" y="2" width="1" height="1" fill="#4a4a4e"/><rect x="484" y="4" width="1" height="1" fill="#4a4a4e"/><rect x="488" y="0" width="1" height="1" fill="#4a4a4e"/><rect x="490" y="2" width="1" height="1" fill="#4a4a4e"/><rect x="488" y="4" width="1" height="1" fill="#4a4a4e"/><rect x="492" y="0" width="1" height="1" fill="#4a4a4e"/><rect x="494" y="2" width="1" height="1" fill="#4a4a4e"/><rect x="492" y="4" width="1" height="1" fill="#4a4a4e"/><rect x="496" y="0" width="1" height="1" fill="#4a4a4e"/><rect x="498" y="2" width="1" height="1" fill="#4a4a4e"/><rect x="496" y="4" width="1" height="1" fill="#4a4a4e"/><rect x="500" y="0" width="1" height="1" fill="#4a4a4e"/><rect x="502" y="2" width="1" height="1" fill="#4a4a4e"/><rect x="500" y="4" width="1" height="1" fill="#4a4a4e"/><rect x="504" y="0" width="1" height="1" fill="#4a4a4e"/><rect x="506" y="2" width="1" height="1" fill="#4a4a4e"/><rect x="504" y="4" width="1" height="1" fill="#4a4a4e"/><rect x="508" y="0" width="1" height="1" fill="#4a4a4e"/><rect x="510" y="2" width="1" height="1" fill="#4a4a4e"/><rect x="508" y="4" width="1" height="1" fill="#4a4a4e"/><rect x="512" y="0" width="1" height="1" fill="#4a4a4e"/><rect x="514" y="2" width="1" height="1" fill="#4a4a4e"/><rect x="512" y="4" width="1" height="1" fill="#4a4a4e"/><rect x="516" y="0" width="1" height="1" fill="#4a4a4e"/><rect x="518" y="2" width="1" height="1" fill="#4a4a4e"/><rect x="516" y="4" width="1" height="1" fill="#4a4a4e"/><rect x="520" y="0" width="1" height="1" fill="#4a4a4e"/><rect x="522" y="2" width="1" height="1" fill="#4a4a4e"/><rect x="520" y="4" width="1" height="1" fill="#4a4a4e"/><rect x="524" y="0" width="1" height="1" fill="#4a4a4e"/><rect x="526" y="2" width="1" height="1" fill="#4a4a4e"/><rect x="524" y="4" width="1" height="1" fill="#4a4a4e"/><rect x="528" y="0" width="1" height="1" fill="#4a4a4e"/><rect x="530" y="2" width="1" height="1" fill="#4a4a4e"/><rect x="528" y="4" width="1" height="1" fill="#4a4a4e"/><rect x="532" y="0" width="1" height="1" fill="#4a4a4e"/><rect x="534" y="2" width="1" height="1" fill="#4a4a4e"/><rect x="532" y="4" width="1" height="1" fill="#4a4a4e"/><rect x="536" y="0" width="1" height="1" fill="#4a4a4e"/><rect x="538" y="2" width="1" height="1" fill="#4a4a4e"/><rect x="536" y="4" width="1" height="1" fill="#4a4a4e"/><rect x="540" y="0" width="1" height="1" fill="#4a4a4e"/><rect x="542" y="2" width="1" height="1" fill="#4a4a4e"/><rect x="540" y="4" width="1" height="1" fill="#4a4a4e"/><rect x="544" y="0" width="1" height="1" fill="#4a4a4e"/><rect x="546" y="2" width="1" height="1" fill="#4a4a4e"/><rect x="544" y="4" width="1" height="1" fill="#4a4a4e"/><rect x="548" y="0" width="1" height="1" fill="#4a4a4e"/><rect x="550" y="2" width="1" height="1" fill="#4a4a4e"/><rect x="548" y="4" width="1" height="1" fill="#4a4a4e"/><rect x="552" y="0" width="1" height="1" fill="#4a4a4e"/><rect x="554" y="2" width="1" height="1" fill="#4a4a4e"/><rect x="552" y="4" width="1" height="1" fill="#4a4a4e"/><rect x="556" y="0" width="1" height="1" fill="#4a4a4e"/><rect x="558" y="2" width="1" height="1" fill="#4a4a4e"/><rect x="556" y="4" width="1" height="1" fill="#4a4a4e"/><rect x="560" y="0" width="1" height="1" fill="#4a4a4e"/><rect x="562" y="2" width="1" height="1" fill="#4a4a4e"/><rect x="560" y="4" width="1" height="1" fill="#4a4a4e"/><rect x="564" y="0" width="1" height="1" fill="#4a4a4e"/><rect x="566" y="2" width="1" height="1" fill="#4a4a4e"/><rect x="564" y="4" width="1" height="1" fill="#4a4a4e"/><rect x="568" y="0" width="1" height="1" fill="#4a4a4e"/><rect x="570" y="2" width="1" height="1" fill="#4a4a4e"/><rect x="568" y="4" width="1" height="1" fill="#4a4a4e"/><rect x="572" y="0" width="1" height="1" fill="#4a4a4e"/><rect x="574" y="2" width="1" height="1" fill="#4a4a4e"/><rect x="572" y="4" width="1" height="1" fill="#4a4a4e"/><rect x="576" y="0" width="1" height="1" fill="#4a4a4e"/><rect x="578" y="2" width="1" height="1" fill="#4a4a4e"/><rect x="576" y="4" width="1" height="1" fill="#4a4a4e"/><rect x="580" y="0" width="1" height="1" fill="#4a4a4e"/><rect x="582" y="2" width="1" height="1" fill="#4a4a4e"/><rect x="580" y="4" width="1" height="1" fill="#4a4a4e"/><rect x="584" y="0" width="1" height="1" fill="#4a4a4e"/><rect x="586" y="2" width="1" height="1" fill="#4a4a4e"/><rect x="584" y="4" width="1" height="1" fill="#4a4a4e"/><rect x="588" y="0" width="1" height="1" fill="#4a4a4e"/><rect x="590" y="2" width="1" height="1" fill="#4a4a4e"/><rect x="588" y="4" width="1" height="1" fill="#4a4a4e"/><rect x="592" y="0" width="1" height="1" fill="#4a4a4e"/><rect x="594" y="2" width="1" height="1" fill="#4a4a4e"/><rect x="592" y="4" width="1" height="1" fill="#4a4a4e"/><rect x="596" y="0" width="1" height="1" fill="#4a4a4e"/><rect x="598" y="2" width="1" height="1" fill="#4a4a4e"/><rect x="596" y="4" width="1" height="1" fill="#4a4a4e"/><rect x="600" y="0" width="1" height="1" fill="#4a4a4e"/><rect x="602" y="2" width="1" height="1" fill="#4a4a4e"/><rect x="600" y="4" width="1" height="1" fill="#4a4a4e"/><rect x="604" y="0" width="1" height="1" fill="#4a4a4e"/><rect x="606" y="2" width="1" height="1" fill="#4a4a4e"/><rect x="604" y="4" width="1" height="1" fill="#4a4a4e"/><rect x="608" y="0" width="1" height="1" fill="#4a4a4e"/><rect x="610" y="2" width="1" height="1" fill="#4a4a4e"/><rect x="608" y="4" width="1" height="1" fill="#4a4a4e"/><rect x="612" y="0" width="1" height="1" fill="#4a4a4e"/><rect x="614" y="2" width="1" height="1" fill="#4a4a4e"/><rect x="612" y="4" width="1" height="1" fill="#4a4a4e"/><rect x="616" y="0" width="1" height="1" fill="#4a4a4e"/><rect x="618" y="2" width="1" height="1" fill="#4a4a4e"/><rect x="616" y="4" width="1" height="1" fill="#4a4a4e"/><rect x="620" y="0" width="1" height="1" fill="#4a4a4e"/><rect x="622" y="2" width="1" height="1" fill="#4a4a4e"/><rect x="620" y="4" width="1" height="1" fill="#4a4a4e"/><rect x="624" y="0" width="1" height="1" fill="#4a4a4e"/><rect x="626" y="2" width="1" height="1" fill="#4a4a4e"/><rect x="624" y="4" width="1" height="1" fill="#4a4a4e"/><rect x="628" y="0" width="1" height="1" fill="#4a4a4e"/><rect x="630" y="2" width="1" height="1" fill="#4a4a4e"/><rect x="628" y="4" width="1" height="1" fill="#4a4a4e"/><rect x="632" y="0" width="1" height="1" fill="#4a4a4e"/><rect x="634" y="2" width="1" height="1" fill="#4a4a4e"/><rect x="632" y="4" width="1" height="1" fill="#4a4a4e"/><rect x="636" y="0" width="1" height="1" fill="#4a4a4e"/><rect x="638" y="2" width="1" height="1" fill="#4a4a4e"/><rect x="636" y="4" width="1" height="1" fill="#4a4a4e"/><rect x="640" y="0" width="1" height="1" fill="#4a4a4e"/><rect x="642" y="2" width="1" height="1" fill="#4a4a4e"/><rect x="640" y="4" width="1" height="1" fill="#4a4a4e"/><rect x="644" y="0" width="1" height="1" fill="#4a4a4e"/><rect x="646" y="2" width="1" height="1" fill="#4a4a4e"/><rect x="644" y="4" width="1" height="1" fill="#4a4a4e"/><rect x="648" y="0" width="1" height="1" fill="#4a4a4e"/><rect x="650" y="2" width="1" height="1" fill="#4a4a4e"/><rect x="648" y="4" width="1" height="1" fill="#4a4a4e"/><rect x="652" y="0" width="1" height="1" fill="#4a4a4e"/><rect x="654" y="2" width="1" height="1" fill="#4a4a4e"/><rect x="652" y="4" width="1" height="1" fill="#4a4a4e"/><rect x="656" y="0" width="1" height="1" fill="#4a4a4e"/><rect x="658" y="2" width="1" height="1" fill="#4a4a4e"/><rect x="656" y="4" width="1" height="1" fill="#4a4a4e"/><rect x="660" y="0" width="1" height="1" fill="#4a4a4e"/><rect x="662" y="2" width="1" height="1" fill="#4a4a4e"/><rect x="660" y="4" width="1" height="1" fill="#4a4a4e"/><rect x="664" y="0" width="1" height="1" fill="#4a4a4e"/><rect x="666" y="2" width="1" height="1" fill="#4a4a4e"/><rect x="664" y="4" width="1" height="1" fill="#4a4a4e"/><rect x="668" y="0" width="1" height="1" fill="#4a4a4e"/><rect x="670" y="2" width="1" height="1" fill="#4a4a4e"/><rect x="668" y="4" width="1" height="1" fill="#4a4a4e"/><rect x="672" y="0" width="1" height="1" fill="#4a4a4e"/><rect x="674" y="2" width="1" height="1" fill="#4a4a4e"/><rect x="672" y="4" width="1" height="1" fill="#4a4a4e"/><rect x="676" y="0" width="1" height="1" fill="#4a4a4e"/><rect x="678" y="2" width="1" height="1" fill="#4a4a4e"/><rect x="676" y="4" width="1" height="1" fill="#4a4a4e"/><rect x="680" y="0" width="1" height="1" fill="#4a4a4e"/><rect x="682" y="2" width="1" height="1" fill="#4a4a4e"/><rect x="680" y="4" width="1" height="1" fill="#4a4a4e"/><rect x="684" y="0" width="1" height="1" fill="#4a4a4e"/><rect x="686" y="2" width="1" height="1" fill="#4a4a4e"/><rect x="684" y="4" width="1" height="1" fill="#4a4a4e"/><rect x="688" y="0" width="1" height="1" fill="#4a4a4e"/><rect x="690" y="2" width="1" height="1" fill="#4a4a4e"/><rect x="688" y="4" width="1" height="1" fill="#4a4a4e"/><rect x="692" y="0" width="1" height="1" fill="#4a4a4e"/><rect x="694" y="2" width="1" height="1" fill="#4a4a4e"/><rect x="692" y="4" width="1" height="1" fill="#4a4a4e"/><rect x="696" y="0" width="1" height="1" fill="#4a4a4e"/><rect x="698" y="2" width="1" height="1" fill="#4a4a4e"/><rect x="696" y="4" width="1" height="1" fill="#4a4a4e"/><rect x="700" y="0" width="1" height="1" fill="#4a4a4e"/><rect x="702" y="2" width="1" height="1" fill="#4a4a4e"/><rect x="700" y="4" width="1" height="1" fill="#4a4a4e"/><rect x="704" y="0" width="1" height="1" fill="#4a4a4e"/><rect x="706" y="2" width="1" height="1" fill="#4a4a4e"/><rect x="704" y="4" width="1" height="1" fill="#4a4a4e"/><rect x="708" y="0" width="1" height="1" fill="#4a4a4e"/><rect x="710" y="2" width="1" height="1" fill="#4a4a4e"/><rect x="708" y="4" width="1" height="1" fill="#4a4a4e"/><rect x="712" y="0" width="1" height="1" fill="#4a4a4e"/><rect x="714" y="2" width="1" height="1" fill="#4a4a4e"/><rect x="712" y="4" width="1" height="1" fill="#4a4a4e"/><rect x="716" y="0" width="1" height="1" fill="#4a4a4e"/><rect x="718" y="2" width="1" height="1" fill="#4a4a4e"/><rect x="716" y="4" width="1" height="1" fill="#4a4a4e"/><rect x="720" y="0" width="1" height="1" fill="#4a4a4e"/><rect x="722" y="2" width="1" height="1" fill="#4a4a4e"/><rect x="720" y="4" width="1" height="1" fill="#4a4a4e"/><rect x="724" y="0" width="1" height="1" fill="#4a4a4e"/><rect x="726" y="2" width="1" height="1" fill="#4a4a4e"/><rect x="724" y="4" width="1" height="1" fill="#4a4a4e"/><rect x="728" y="0" width="1" height="1" fill="#4a4a4e"/><rect x="730" y="2" width="1" height="1" fill="#4a4a4e"/><rect x="728" y="4" width="1" height="1" fill="#4a4a4e"/><rect x="732" y="0" width="1" height="1" fill="#4a4a4e"/><rect x="734" y="2" width="1" height="1" fill="#4a4a4e"/><rect x="732" y="4" width="1" height="1" fill="#4a4a4e"/><rect x="736" y="0" width="1" height="1" fill="#4a4a4e"/><rect x="738" y="2" width="1" height="1" fill="#4a4a4e"/><rect x="736" y="4" width="1" height="1" fill="#4a4a4e"/><rect x="740" y="0" width="1" height="1" fill="#4a4a4e"/><rect x="742" y="2" width="1" height="1" fill="#4a4a4e"/><rect x="740" y="4" width="1" height="1" fill="#4a4a4e"/><rect x="744" y="0" width="1" height="1" fill="#4a4a4e"/><rect x="746" y="2" width="1" height="1" fill="#4a4a4e"/><rect x="744" y="4" width="1" height="1" fill="#4a4a4e"/><rect x="748" y="0" width="1" height="1" fill="#4a4a4e"/><rect x="750" y="2" width="1" height="1" fill="#4a4a4e"/><rect x="748" y="4" width="1" height="1" fill="#4a4a4e"/><rect x="752" y="0" width="1" height="1" fill="#4a4a4e"/><rect x="754" y="2" width="1" height="1" fill="#4a4a4e"/><rect x="752" y="4" width="1" height="1" fill="#4a4a4e"/><rect x="756" y="0" width="1" height="1" fill="#4a4a4e"/><rect x="758" y="2" width="1" height="1" fill="#4a4a4e"/><rect x="756" y="4" width="1" height="1" fill="#4a4a4e"/><rect x="760" y="0" width="1" height="1" fill="#4a4a4e"/><rect x="762" y="2" width="1" height="1" fill="#4a4a4e"/><rect x="760" y="4" width="1" height="1" fill="#4a4a4e"/><rect x="764" y="0" width="1" height="1" fill="#4a4a4e"/><rect x="766" y="2" width="1" height="1" fill="#4a4a4e"/><rect x="764" y="4" width="1" height="1" fill="#4a4a4e"/><rect x="768" y="0" width="1" height="1" fill="#4a4a4e"/><rect x="770" y="2" width="1" height="1" fill="#4a4a4e"/><rect x="768" y="4" width="1" height="1" fill="#4a4a4e"/><rect x="772" y="0" width="1" height="1" fill="#4a4a4e"/><rect x="774" y="2" width="1" height="1" fill="#4a4a4e"/><rect x="772" y="4" width="1" height="1" fill="#4a4a4e"/></svg>
<svg class="a" style="left:871px;top:781.5px" width="9" height="5" viewBox="0 0 9 5"><path d="M0.5 0.5 H8.5 L4.5 4.5 Z" fill="#f1f1f1"/></svg>
<svg class="a" style="left:888px;top:778.5px" width="8" height="11" viewBox="0 0 8 11"><path d="M1.5 0.5 H6.5 V6 H1.5 Z" fill="none" stroke="#f1f1f1"/><rect x="1" y="0" width="3" height="6" fill="#f1f1f1"/><path d="M0 6.5 H8 M4 7 V11" stroke="#f1f1f1"/></svg>
<svg class="a" style="left:902.5px;top:779.0px" width="11" height="10" viewBox="0 0 11 10"><path d="M1 1 L10 9 M10 1 L1 9" stroke="#f1f1f1" stroke-width="1.5"/></svg>
<svg class="a" style="left:42px;top:804px" width="10" height="10" viewBox="0 0 10 10"><path d="M0.5 0.5 H9.5 L6 4.5 V9.5 H4 V4.5 Z" fill="#d0d0d0"/></svg>
<svg class="a" style="left:61px;top:808px" width="7" height="4" viewBox="0 0 7 4"><path d="M0 0 H6 L3 3 Z" fill="#999"/></svg>
<div class="a" style="left:76px;top:799px;width:1px;height:20px;background:#3f3f46"></div>
<div class="a" style="left:79px;top:797px;width:65px;height:24px;border:1px solid #3399ff"></div>
<svg class="a" style="left:81px;top:801px" width="18" height="18" viewBox="0 0 18 18"><circle cx="9" cy="9" r="8" fill="#fff"/><circle cx="9" cy="9" r="6.8" fill="#e51400"/><path d="M6 6 L12 12 M12 6 L6 12" stroke="#fff" stroke-width="2.2"/></svg>
<div class="t" style="left:102.50px;top:803.54px;font-size:12px;color:#f1f1f1;transform:scaleX(0.9189)">1 Error</div>
<div class="a" style="left:148px;top:799px;width:1px;height:20px;background:#3f3f46"></div>
<svg class="a" style="left:154px;top:801px" width="19" height="17" viewBox="0 0 19 17"><path d="M9.5 1 L18 16 H1 Z" fill="#5a5a5a"/><rect x="8.6" y="5.5" width="1.8" height="6" fill="#2d2d30"/><rect x="8.6" y="12.8" width="1.8" height="1.8" fill="#2d2d30"/></svg>
<div class="t" style="left:175.00px;top:803.54px;font-size:12px;color:#6a6a6a;transform:scaleX(0.9743)">0 Warnings</div>
<div class="a" style="left:246px;top:799px;width:1px;height:20px;background:#3f3f46"></div>
<svg class="a" style="left:252px;top:801px" width="18" height="18" viewBox="0 0 18 18"><circle cx="9" cy="9" r="7.5" fill="none" stroke="#5a5a5a" stroke-width="1.5"/><rect x="8" y="7.5" width="2" height="6" fill="#5a5a5a"/><rect x="8" y="4.5" width="2" height="2" fill="#5a5a5a"/></svg>
<div class="t" style="left:273.00px;top:803.54px;font-size:12px;color:#6a6a6a;transform:scaleX(0.9273)">0 Messages</div>
<div class="a" style="left:719px;top:797px;width:188px;height:21px;background:#333337;border:1px solid #3f3f46"></div>
<div class="t" style="left:724.00px;top:802.34px;font-size:12px;color:#999999;transform:scaleX(0.9330)">Search Error List</div>
<svg class="a" style="left:890px;top:800px" width="14" height="14" viewBox="0 0 14 14"><circle cx="8.5" cy="5.5" r="3.8" fill="none" stroke="#f1f1f1" stroke-width="1.8"/><path d="M6 8 L1.5 12.5" stroke="#f1f1f1" stroke-width="2.5"/></svg>
<div class="a" style="left:906px;top:797px;width:11px;height:21px;background:#3f3f46"></div>
<svg class="a" style="left:909px;top:806px" width="7" height="4" viewBox="0 0 7 4"><path d="M0 0 H6 L3 3 Z" fill="#f1f1f1"/></svg>
<div class="a" style="left:32px;top:823px;width:886px;height:23px;background:#252526"></div>
<div class="a" style="left:48px;top:824px;width:1px;height:22px;background:#3f3f46"></div>
<div class="a" style="left:66px;top:824px;width:1px;height:22px;background:#3f3f46"></div>
<div class="a" style="left:538px;top:824px;width:1px;height:22px;background:#3f3f46"></div>
<div class="a" style="left:658px;top:824px;width:1px;height:22px;background:#3f3f46"></div>
<div class="a" style="left:728px;top:824px;width:1px;height:22px;background:#3f3f46"></div>
<div class="a" style="left:798px;top:824px;width:1px;height:22px;background:#3f3f46"></div>
<div class="t" style="left:72.50px;top:828.54px;font-size:12px;color:#f1f1f1;transform:scaleX(0.9829)">Description</div>
<div class="t" style="left:544.00px;top:828.54px;font-size:12px;color:#f1f1f1;transform:scaleX(0.9309)">File</div>
<div class="t" style="left:664.40px;top:828.54px;font-size:12px;color:#f1f1f1;transform:scaleX(0.9520)">Line</div>
<div class="t" style="left:734.00px;top:828.54px;font-size:12px;color:#f1f1f1;transform:scaleX(1.0278)">Column</div>
<div class="t" style="left:803.70px;top:828.54px;font-size:12px;color:#f1f1f1;transform:scaleX(1.0040)">Project</div>
<div class="a" style="left:32px;top:846px;width:886px;height:21px;background:#3f3f46"></div>
<svg class="a" style="left:31px;top:848px" width="18" height="18" viewBox="0 0 18 18"><circle cx="9" cy="9" r="8" fill="#fff"/><circle cx="9" cy="9" r="6.8" fill="#e51400"/><path d="M6 6 L12 12 M12 6 L6 12" stroke="#fff" stroke-width="2.2"/></svg>
<div class="t" style="left:51.30px;top:851.14px;font-size:12px;color:#f1f1f1">1</div>
<div class="t" style="left:69.50px;top:851.14px;font-size:12px;color:#f1f1f1;transform:scaleX(0.9734)">error RC1015: cannot open include file 'afxres.h'.</div>
<div class="t" style="left:541.20px;top:851.14px;font-size:12px;color:#f1f1f1;transform:scaleX(0.9559)">UserInterface.rc</div>
<div class="t" style="left:661.60px;top:851.14px;font-size:12px;color:#f1f1f1;transform:scaleX(0.8027)">11</div>
<div class="t" style="left:733.00px;top:851.14px;font-size:12px;color:#f1f1f1">1</div>
<div class="t" style="left:801.20px;top:851.14px;font-size:12px;color:#f1f1f1;transform:scaleX(0.9551)">UserInterface</div>
<div class="a" style="left:32px;top:867px;width:886px;height:77px;background:#252526"></div>
<div class="a" style="left:31px;top:823px;width:1px;height:122px;background:#3f3f46"></div>
<div class="a" style="left:919px;top:774px;width:1px;height:171px;background:#3f3f46"></div>
<div class="a" style="left:31px;top:944px;width:889px;height:1px;background:#3f3f46"></div>
<div class="a" style="left:31px;top:944px;width:58px;height:21px;background:#252526;border:1px solid #3f3f46;border-top:none"></div>
<div class="t" style="left:37.30px;top:948.34px;font-size:12px;color:#0097fb;transform:scaleX(0.9348)">Error List</div>
<div class="t" style="left:94.50px;top:948.34px;font-size:12px;color:#f1f1f1;transform:scaleX(1.0410)">Output</div>
<div class="a" style="left:926px;top:85px;width:348px;height:487px;background:#2d2d30;border:1px solid #3f3f46"></div>
<div class="t" style="left:931.30px;top:91.04px;font-size:12px;color:#f1f1f1;transform:scaleX(0.9706)">Solution Explorer</div>
<svg class="a" style="left:1028px;top:94.5px" width="190" height="5" viewBox="0 0 190 5"><rect x="0" y="0" width="1" height="1" fill="#4a4a4e"/><rect x="2" y="2" width="1" height="1" fill="#4a4a4e"/><rect x="0" y="4" width="1" height="1" fill="#4a4a4e"/><rect x="4" y="0" width="1" height="1" fill="#4a4a4e"/><rect x="6" y="2" width="1" height="1" fill="#4a4a4e"/><rect x="4" y="4" width="1" height="1" fill="#4a4a4e"/><rect x="8" y="0" width="1" height="1" fill="#4a4a4e"/><rect x="10" y="2" width="1" height="1" fill="#4a4a4e"/><rect x="8" y="4" width="1" height="1" fill="#4a4a4e"/><rect x="12" y="0" width="1" height="1" fill="#4a4a4e"/><rect x="14" y="2" width="1" height="1" fill="#4a4a4e"/><rect x="12" y="4" width="1" height="1" fill="#4a4a4e"/><rect x="16" y="0" width="1" height="1" fill="#4a4a4e"/><rect x="18" y="2" width="1" height="1" fill="#4a4a4e"/><rect x="16" y="4" width="1" height="1" fill="#4a4a4e"/><rect x="20" y="0" width="1" height="1" fill="#4a4a4e"/><rect x="22" y="2" width="1" height="1" fill="#4a4a4e"/><rect x="20" y="4" width="1" height="1" fill="#4a4a4e"/><rect x="24" y="0" width="1" height="1" fill="#4a4a4e"/><rect x="26" y="2" width="1" height="1" fill="#4a4a4e"/><rect x="24" y="4" width="1" height="1" fill="#4a4a4e"/><rect x="28" y="0" width="1" height="1" fill="#4a4a4e"/><rect x="30" y="2" width="1" height="1" fill="#4a4a4e"/><rect x="28" y="4" width="1" height="1" fill="#4a4a4e"/><rect x="32" y="0" width="1" height="1" fill="#4a4a4e"/><rect x="34" y="2" width="1" height="1" fill="#4a4a4e"/><rect x="32" y="4" width="1" height="1" fill="#4a4a4e"/><rect x="36" y="0" width="1" height="1" fill="#4a4a4e"/><rect x="38" y="2" width="1" height="1" fill="#4a4a4e"/><rect x="36" y="4" width="1" height="1" fill="#4a4a4e"/><rect x="40" y="0" width="1" height="1" fill="#4a4a4e"/><rect x="42" y="2" width="1" height="1" fill="#4a4a4e"/><rect x="40" y="4" width="1" height="1" fill="#4a4a4e"/><rect x="44" y="0" width="1" height="1" fill="#4a4a4e"/><rect x="46" y="2" width="1" height="1" fill="#4a4a4e"/><rect x="44" y="4" width="1" height="1" fill="#4a4a4e"/><rect x="48" y="0" width="1" height="1" fill="#4a4a4e"/><rect x="50" y="2" width="1" height="1" fill="#4a4a4e"/><rect x="48" y="4" width="1" height="1" fill="#4a4a4e"/><rect x="52" y="0" width="1" height="1" fill="#4a4a4e"/><rect x="54" y="2" width="1" height="1" fill="#4a4a4e"/><rect x="52" y="4" width="1" height="1" fill="#4a4a4e"/><rect x="56" y="0" width="1" height="1" fill="#4a4a4e"/><rect x="58" y="2" width="1" height="1" fill="#4a4a4e"/><rect x="56" y="4" width="1" height="1" fill="#4a4a4e"/><rect x="60" y="0" width="1" height="1" fill="#4a4a4e"/><rect x="62" y="2" width="1" height="1" fill="#4a4a4e"/><rect x="60" y="4" width="1" height="1" fill="#4a4a4e"/><rect x="64" y="0" width="1" height="1" fill="#4a4a4e"/><rect x="66" y="2" width="1" height="1" fill="#4a4a4e"/><rect x="64" y="4" width="1" height="1" fill="#4a4a4e"/><rect x="68" y="0" width="1" height="1" fill="#4a4a4e"/><rect x="70" y="2" width="1" height="1" fill="#4a4a4e"/><rect x="68" y="4" width="1" height="1" fill="#4a4a4e"/><rect x="72" y="0" width="1" height="1" fill="#4a4a4e"/><rect x="74" y="2" width="1" height="1" fill="#4a4a4e"/><rect x="72" y="4" width="1" height="1" fill="#4a4a4e"/><rect x="76" y="0" width="1" height="1" fill="#4a4a4e"/><rect x="78" y="2" width="1" height="1" fill="#4a4a4e"/><rect x="76" y="4" width="1" height="1" fill="#4a4a4e"/><rect x="80" y="0" width="1" height="1" fill="#4a4a4e"/><rect x="82" y="2" width="1" height="1" fill="#4a4a4e"/><rect x="80" y="4" width="1" height="1" fill="#4a4a4e"/><rect x="84" y="0" width="1" height="1" fill="#4a4a4e"/><rect x="86" y="2" width="1" height="1" fill="#4a4a4e"/><rect x="84" y="4" width="1" height="1" fill="#4a4a4e"/><rect x="88" y="0" width="1" height="1" fill="#4a4a4e"/><rect x="90" y="2" width="1" height="1" fill="#4a4a4e"/><rect x="88" y="4" width="1" height="1" fill="#4a4a4e"/><rect x="92" y="0" width="1" height="1" fill="#4a4a4e"/><rect x="94" y="2" width="1" height="1" fill="#4a4a4e"/><rect x="92" y="4" width="1" height="1" fill="#4a4a4e"/><rect x="96" y="0" width="1" height="1" fill="#4a4a4e"/><rect x="98" y="2" width="1" height="1" fill="#4a4a4e"/><rect x="96" y="4" width="1" height="1" fill="#4a4a4e"/><rect x="100" y="0" width="1" height="1" fill="#4a4a4e"/><rect x="102" y="2" width="1" height="1" fill="#4a4a4e"/><rect x="100" y="4" width="1" height="1" fill="#4a4a4e"/><rect x="104" y="0" width="1" height="1" fill="#4a4a4e"/><rect x="106" y="2" width="1" height="1" fill="#4a4a4e"/><rect x="104" y="4" width="1" height="1" fill="#4a4a4e"/><rect x="108" y="0" width="1" height="1" fill="#4a4a4e"/><rect x="110" y="2" width="1" height="1" fill="#4a4a4e"/><rect x="108" y="4" width="1" height="1" fill="#4a4a4e"/><rect x="112" y="0" width="1" height="1" fill="#4a4a4e"/><rect x="114" y="2" width="1" height="1" fill="#4a4a4e"/><rect x="112" y="4" width="1" height="1" fill="#4a4a4e"/><rect x="116" y="0" width="1" height="1" fill="#4a4a4e"/><rect x="118" y="2" width="1" height="1" fill="#4a4a4e"/><rect x="116" y="4" width="1" height="1" fill="#4a4a4e"/><rect x="120" y="0" width="1" height="1" fill="#4a4a4e"/><rect x="122" y="2" width="1" height="1" fill="#4a4a4e"/><rect x="120" y="4" width="1" height="1" fill="#4a4a4e"/><rect x="124" y="0" width="1" height="1" fill="#4a4a4e"/><rect x="126" y="2" width="1" height="1" fill="#4a4a4e"/><rect x="124" y="4" width="1" height="1" fill="#4a4a4e"/><rect x="128" y="0" width="1" height="1" fill="#4a4a4e"/><rect x="130" y="2" width="1" height="1" fill="#4a4a4e"/><rect x="128" y="4" width="1" height="1" fill="#4a4a4e"/><rect x="132" y="0" width="1" height="1" fill="#4a4a4e"/><rect x="134" y="2" width="1" height="1" fill="#4a4a4e"/><rect x="132" y="4" width="1" height="1" fill="#4a4a4e"/><rect x="136" y="0" width="1" height="1" fill="#4a4a4e"/><rect x="138" y="2" width="1" height="1" fill="#4a4a4e"/><rect x="136" y="4" width="1" height="1" fill="#4a4a4e"/><rect x="140" y="0" width="1" height="1" fill="#4a4a4e"/><rect x="142" y="2" width="1" height="1" fill="#4a4a4e"/><rect x="140" y="4" width="1" height="1" fill="#4a4a4e"/><rect x="144" y="0" width="1" height="1" fill="#4a4a4e"/><rect x="146" y="2" width="1" height="1" fill="#4a4a4e"/><rect x="144" y="4" width="1" height="1" fill="#4a4a4e"/><rect x="148" y="0" width="1" height="1" fill="#4a4a4e"/><rect x="150" y="2" width="1" height="1" fill="#4a4a4e"/><rect x="148" y="4" width="1" height="1" fill="#4a4a4e"/><rect x="152" y="0" width="1" height="1" fill="#4a4a4e"/><rect x="154" y="2" width="1" height="1" fill="#4a4a4e"/><rect x="152" y="4" width="1" height="1" fill="#4a4a4e"/><rect x="156" y="0" width="1" height="1" fill="#4a4a4e"/><rect x="158" y="2" width="1" height="1" fill="#4a4a4e"/><rect x="156" y="4" width="1" height="1" fill="#4a4a4e"/><rect x="160" y="0" width="1" height="1" fill="#4a4a4e"/><rect x="162" y="2" width="1" height="1" fill="#4a4a4e"/><rect x="160" y="4" width="1" height="1" fill="#4a4a4e"/><rect x="164" y="0" width="1" height="1" fill="#4a4a4e"/><rect x="166" y="2" width="1" height="1" fill="#4a4a4e"/><rect x="164" y="4" width="1" height="1" fill="#4a4a4e"/><rect x="168" y="0" width="1" height="1" fill="#4a4a4e"/><rect x="170" y="2" width="1" height="1" fill="#4a4a4e"/><rect x="168" y="4" width="1" height="1" fill="#4a4a4e"/><rect x="172" y="0" width="1" height="1" fill="#4a4a4e"/><rect x="174" y="2" width="1" height="1" fill="#4a4a4e"/><rect x="172" y="4" width="1" height="1" fill="#4a4a4e"/><rect x="176" y="0" width="1" height="1" fill="#4a4a4e"/><rect x="178" y="2" width="1" height="1" fill="#4a4a4e"/><rect x="176" y="4" width="1" height="1" fill="#4a4a4e"/><rect x="180" y="0" width="1" height="1" fill="#4a4a4e"/><rect x="182" y="2" width="1" height="1" fill="#4a4a4e"/><rect x="180" y="4" width="1" height="1" fill="#4a4a4e"/><rect x="184" y="0" width="1" height="1" fill="#4a4a4e"/><rect x="186" y="2" width="1" height="1" fill="#4a4a4e"/><rect x="184" y="4" width="1" height="1" fill="#4a4a4e"/><rect x="188" y="0" width="1" height="1" fill="#4a4a4e"/><rect x="190" y="2" width="1" height="1" fill="#4a4a4e"/><rect x="188" y="4" width="1" height="1" fill="#4a4a4e"/></svg>
<svg class="a" style="left:1225px;top:94px" width="9" height="5" viewBox="0 0 9 5"><path d="M0.5 0.5 H8.5 L4.5 4.5 Z" fill="#f1f1f1"/></svg>
<svg class="a" style="left:1242px;top:91px" width="8" height="11" viewBox="0 0 8 11"><path d="M1.5 0.5 H6.5 V6 H1.5 Z" fill="none" stroke="#f1f1f1"/><rect x="1" y="0" width="3" height="6" fill="#f1f1f1"/><path d="M0 6.5 H8 M4 7 V11" stroke="#f1f1f1"/></svg>
<svg class="a" style="left:1256.5px;top:91.5px" width="11" height="10" viewBox="0 0 11 10"><path d="M1 1 L10 9 M10 1 L1 9" stroke="#f1f1f1" stroke-width="1.5"/></svg>
<svg class="a" style="left:934px;top:113px" width="16" height="16" viewBox="0 0 16 16"><circle cx="8" cy="8" r="6.2" fill="#555558"/><path d="M11 8 H5 M7.5 5.5 L5 8 L7.5 10.5" stroke="#2d2d30" stroke-width="1.6" fill="none"/></svg>
<svg class="a" style="left:956px;top:113px" width="16" height="16" viewBox="0 0 16 16"><circle cx="8" cy="8" r="6.2" fill="#555558"/><path d="M5 8 H11 M8.5 5.5 L11 8 L8.5 10.5" stroke="#2d2d30" stroke-width="1.6" fill="none"/></svg>
<svg class="a" style="left:978px;top:113px" width="16" height="16" viewBox="0 0 16 16"><path d="M1.5 8.5 L8 2 L14.5 8.5 M3.5 7 V14.5 H12.5 V7 M12 2 V6" fill="none" stroke="#e0e0e0" stroke-width="1.3"/><rect x="6.5" y="10" width="3" height="4.5" fill="#e0e0e0"/></svg>
<div class="a" style="left:1001px;top:111px;width:1px;height:20px;background:#3f3f46"></div>
<svg class="a" style="left:1010px;top:113px" width="16" height="16" viewBox="0 0 16 16"><circle cx="9" cy="9" r="5" fill="none" stroke="#e0e0e0" stroke-width="1.8"/><path d="M9 6.5 V9 H11" stroke="#e0e0e0" fill="none"/><path d="M1 1 H6 L3.5 4 Z" fill="#e0e0e0"/><path d="M3.5 3 V6" stroke="#e0e0e0"/></svg>
<svg class="a" style="left:1030px;top:119px" width="7" height="4" viewBox="0 0 7 4"><path d="M0 0 H6 L3 3 Z" fill="#999"/></svg>
<svg class="a" style="left:1044px;top:113px" width="14" height="15" viewBox="0 0 14 15"><path d="M1 5 H12 M9 2 L12 5 L9 8 M13 10 H2 M5 7 L2 10 L5 13" fill="none" stroke="#e0e0e0" stroke-width="1.8"/></svg>
<svg class="a" style="left:1065px;top:113px" width="16" height="16" viewBox="0 0 16 16"><rect x="1.5" y="6.5" width="8" height="8" fill="none" stroke="#e0e0e0" stroke-width="1.6"/><path d="M4 4 H12 V12 M6.5 1.5 H14.5 V9.5" fill="none" stroke="#e0e0e0" stroke-width="1.3"/><rect x="3.5" y="10" width="4" height="1.5" fill="#75beff"/></svg>
<svg class="a" style="left:1087px;top:113px" width="17" height="17" viewBox="0 0 17 17"><path d="M1 1 H6 M1 1 V6 M1 4 H5 M1 7 V10" stroke="#e0e0e0" stroke-dasharray="1 1" fill="none"/><path d="M7.5 5.5 H12 L15.5 9 V15.5 H7.5 Z M5 3.5 H11" fill="none" stroke="#e0e0e0" stroke-width="1.2"/><path d="M9.5 9.5 H13.5 M9.5 11.5 H13.5 M9.5 13.5 H13.5" stroke="#e0e0e0"/></svg>
<div class="a" style="left:1110px;top:111px;width:1px;height:20px;background:#3f3f46"></div>
<svg class="a" style="left:1118px;top:114px" width="14" height="13" viewBox="0 0 14 13"><path d="M5 2 L1 6.5 L5 11 M9 2 L13 6.5 L9 11" fill="none" stroke="#e0e0e0" stroke-width="1.4"/></svg>
<svg class="a" style="left:1140px;top:113px" width="14" height="15" viewBox="0 0 14 15"><path d="M2 13 L7 8" stroke="#d0d0d0" stroke-width="3.2"/><circle cx="9.5" cy="5" r="3.8" fill="#d0d0d0"/><path d="M9.5 5 L13 1.5" stroke="#2d2d30" stroke-width="2.4"/></svg>
<div class="a" style="left:1158px;top:109px;width:23px;height:24px;border:1px solid #3399ff"></div>
<svg class="a" style="left:1161px;top:117px" width="17" height="8" viewBox="0 0 17 8"><rect x="6" y="0" width="11" height="4" fill="#e0e0e0"/><rect x="1" y="3" width="6" height="1.2" fill="#e0e0e0"/></svg>
<div class="a" style="left:927px;top:135px;width:346px;height:21px;background:#333337"></div>
<div class="a" style="left:927px;top:155px;width:346px;height:1px;background:#3f3f46"></div>
<div class="t" style="left:932.00px;top:140.34px;font-size:12px;color:#999999;transform:scaleX(0.9673)">Search Solution Explorer (Ctrl+ş)</div>
<svg class="a" style="left:1243px;top:138px" width="14" height="14" viewBox="0 0 14 14"><circle cx="8.5" cy="5.5" r="3.8" fill="none" stroke="#f1f1f1" stroke-width="1.8"/><path d="M6 8 L1.5 12.5" stroke="#f1f1f1" stroke-width="2.5"/></svg>
<div class="a" style="left:1259px;top:135px;width:13px;height:20px;background:#3f3f46"></div>
<svg class="a" style="left:1262px;top:144px" width="7" height="4" viewBox="0 0 7 4"><path d="M0 0 H6 L3 3 Z" fill="#f1f1f1"/></svg>
<div class="a" style="left:927px;top:156px;width:346px;height:415px;background:#252526"></div>
<div class="a" style="left:927px;top:448px;width:346px;height:19px;background:#3f3f46"></div>
<svg class="a" style="left:938px;top:161px" width="18" height="18" viewBox="938 161 18 18"><rect x="940" y="163" width="14" height="3" fill="#d4d4d4"/><rect x="940" y="166" width="1.2" height="3" fill="#d4d4d4"/><rect x="952.8" y="166" width="1.2" height="9" fill="#d4d4d4"/><rect x="949" y="173.8" width="5" height="1.2" fill="#d4d4d4"/><path d="M946.8 169.8 L948.2 170.6 V176.4 L946.8 177.2 L943.5 174.2 L941.7 175.6 L940.6 175 V171.4 L941.7 170.8 L943.5 172.2 Z M946.8 171.8 L944.6 173.2 L946.8 175 Z M941.6 172.4 V174 L942.5 173.2 Z" fill="#d4d4d4" fill-rule="evenodd"/></svg>
<div class="t" style="left:960.40px;top:164.04px;font-size:12px;color:#f1f1f1;transform:scaleX(0.9935)">Solution 'Client' (16 projects)</div>
<svg class="a" style="left:937px;top:182px" width="8" height="12" viewBox="0 0 8 12"><path d="M1.5 1.5 L6 6 L1.5 10.5 Z" fill="none" stroke="#f1f1f1" stroke-width="1.3"/></svg>
<svg class="a" style="left:958px;top:182px" width="14" height="12" viewBox="0 0 14 12"><rect x="0.5" y="0.5" width="13" height="11" fill="#1e1e1e" stroke="#c586c0"/><path d="M2 3 H8 V5 H2 Z M4 1 H6 V7 H4 Z M6 7 H12 V9 H6 Z M8 5 H10 V11 H8 Z" fill="#dcdcdc"/></svg>
<div class="t" style="left:978.00px;top:182.44px;font-size:12px;color:#f1f1f1;font-weight:bold;transform:scaleX(0.9780)">CWebBrowser</div>
<svg class="a" style="left:937px;top:200px" width="8" height="12" viewBox="0 0 8 12"><path d="M1.5 1.5 L6 6 L1.5 10.5 Z" fill="none" stroke="#f1f1f1" stroke-width="1.3"/></svg>
<svg class="a" style="left:958px;top:200px" width="14" height="12" viewBox="0 0 14 12"><rect x="0.5" y="0.5" width="13" height="11" fill="#1e1e1e" stroke="#c586c0"/><path d="M2 3 H8 V5 H2 Z M4 1 H6 V7 H4 Z M6 7 H12 V9 H6 Z M8 5 H10 V11 H8 Z" fill="#dcdcdc"/></svg>
<div class="t" style="left:977.90px;top:200.44px;font-size:12px;color:#f1f1f1;transform:scaleX(0.9682)">EffectLib</div>
<svg class="a" style="left:937px;top:218px" width="8" height="12" viewBox="0 0 8 12"><path d="M1.5 1.5 L6 6 L1.5 10.5 Z" fill="none" stroke="#f1f1f1" stroke-width="1.3"/></svg>
<svg class="a" style="left:958px;top:218px" width="14" height="12" viewBox="0 0 14 12"><rect x="0.5" y="0.5" width="13" height="11" fill="#1e1e1e" stroke="#c586c0"/><path d="M2 3 H8 V5 H2 Z M4 1 H6 V7 H4 Z M6 7 H12 V9 H6 Z M8 5 H10 V11 H8 Z" fill="#dcdcdc"/></svg>
<div class="t" style="left:977.90px;top:218.44px;font-size:12px;color:#f1f1f1;transform:scaleX(0.8863)">EterBase</div>
<svg class="a" style="left:937px;top:236px" width="8" height="12" viewBox="0 0 8 12"><path d="M1.5 1.5 L6 6 L1.5 10.5 Z" fill="none" stroke="#f1f1f1" stroke-width="1.3"/></svg>
<svg class="a" style="left:958px;top:236px" width="14" height="12" viewBox="0 0 14 12"><rect x="0.5" y="0.5" width="13" height="11" fill="#1e1e1e" stroke="#c586c0"/><path d="M2 3 H8 V5 H2 Z M4 1 H6 V7 H4 Z M6 7 H12 V9 H6 Z M8 5 H10 V11 H8 Z" fill="#dcdcdc"/></svg>
<div class="t" style="left:977.90px;top:236.44px;font-size:12px;color:#f1f1f1;transform:scaleX(0.9375)">EterGrnLib</div>
<svg class="a" style="left:937px;top:254px" width="8" height="12" viewBox="0 0 8 12"><path d="M1.5 1.5 L6 6 L1.5 10.5 Z" fill="none" stroke="#f1f1f1" stroke-width="1.3"/></svg>
<svg class="a" style="left:958px;top:254px" width="14" height="12" viewBox="0 0 14 12"><rect x="0.5" y="0.5" width="13" height="11" fill="#1e1e1e" stroke="#c586c0"/><path d="M2 3 H8 V5 H2 Z M4 1 H6 V7 H4 Z M6 7 H12 V9 H6 Z M8 5 H10 V11 H8 Z" fill="#dcdcdc"/></svg>
<div class="t" style="left:977.90px;top:254.44px;font-size:12px;color:#f1f1f1;transform:scaleX(0.9583)">EterImageLib</div>
<svg class="a" style="left:937px;top:272px" width="8" height="12" viewBox="0 0 8 12"><path d="M1.5 1.5 L6 6 L1.5 10.5 Z" fill="none" stroke="#f1f1f1" stroke-width="1.3"/></svg>
<svg class="a" style="left:958px;top:272px" width="14" height="12" viewBox="0 0 14 12"><rect x="0.5" y="0.5" width="13" height="11" fill="#1e1e1e" stroke="#c586c0"/><path d="M2 3 H8 V5 H2 Z M4 1 H6 V7 H4 Z M6 7 H12 V9 H6 Z M8 5 H10 V11 H8 Z" fill="#dcdcdc"/></svg>
<div class="t" style="left:977.90px;top:272.44px;font-size:12px;color:#f1f1f1;transform:scaleX(0.9310)">EterLib</div>
<svg class="a" style="left:937px;top:290px" width="8" height="12" viewBox="0 0 8 12"><path d="M1.5 1.5 L6 6 L1.5 10.5 Z" fill="none" stroke="#f1f1f1" stroke-width="1.3"/></svg>
<svg class="a" style="left:958px;top:290px" width="14" height="12" viewBox="0 0 14 12"><rect x="0.5" y="0.5" width="13" height="11" fill="#1e1e1e" stroke="#c586c0"/><path d="M2 3 H8 V5 H2 Z M4 1 H6 V7 H4 Z M6 7 H12 V9 H6 Z M8 5 H10 V11 H8 Z" fill="#dcdcdc"/></svg>
<div class="t" style="left:977.90px;top:290.44px;font-size:12px;color:#f1f1f1;transform:scaleX(0.9308)">EterLocale</div>
<svg class="a" style="left:937px;top:308px" width="8" height="12" viewBox="0 0 8 12"><path d="M1.5 1.5 L6 6 L1.5 10.5 Z" fill="none" stroke="#f1f1f1" stroke-width="1.3"/></svg>
<svg class="a" style="left:958px;top:308px" width="14" height="12" viewBox="0 0 14 12"><rect x="0.5" y="0.5" width="13" height="11" fill="#1e1e1e" stroke="#c586c0"/><path d="M2 3 H8 V5 H2 Z M4 1 H6 V7 H4 Z M6 7 H12 V9 H6 Z M8 5 H10 V11 H8 Z" fill="#dcdcdc"/></svg>
<div class="t" style="left:977.90px;top:308.44px;font-size:12px;color:#f1f1f1;transform:scaleX(0.9161)">EterPack</div>
<svg class="a" style="left:937px;top:326px" width="8" height="12" viewBox="0 0 8 12"><path d="M1.5 1.5 L6 6 L1.5 10.5 Z" fill="none" stroke="#f1f1f1" stroke-width="1.3"/></svg>
<svg class="a" style="left:958px;top:326px" width="14" height="12" viewBox="0 0 14 12"><rect x="0.5" y="0.5" width="13" height="11" fill="#1e1e1e" stroke="#c586c0"/><path d="M2 3 H8 V5 H2 Z M4 1 H6 V7 H4 Z M6 7 H12 V9 H6 Z M8 5 H10 V11 H8 Z" fill="#dcdcdc"/></svg>
<div class="t" style="left:977.90px;top:326.44px;font-size:12px;color:#f1f1f1;transform:scaleX(0.9710)">EterPythonLib</div>
<svg class="a" style="left:937px;top:344px" width="8" height="12" viewBox="0 0 8 12"><path d="M1.5 1.5 L6 6 L1.5 10.5 Z" fill="none" stroke="#f1f1f1" stroke-width="1.3"/></svg>
<svg class="a" style="left:958px;top:344px" width="14" height="12" viewBox="0 0 14 12"><rect x="0.5" y="0.5" width="13" height="11" fill="#1e1e1e" stroke="#c586c0"/><path d="M2 3 H8 V5 H2 Z M4 1 H6 V7 H4 Z M6 7 H12 V9 H6 Z M8 5 H10 V11 H8 Z" fill="#dcdcdc"/></svg>
<div class="t" style="left:977.90px;top:344.44px;font-size:12px;color:#f1f1f1;transform:scaleX(0.9468)">GameLib</div>
<svg class="a" style="left:937px;top:362px" width="8" height="12" viewBox="0 0 8 12"><path d="M1.5 1.5 L6 6 L1.5 10.5 Z" fill="none" stroke="#f1f1f1" stroke-width="1.3"/></svg>
<svg class="a" style="left:958px;top:362px" width="14" height="12" viewBox="0 0 14 12"><rect x="0.5" y="0.5" width="13" height="11" fill="#1e1e1e" stroke="#c586c0"/><path d="M2 3 H8 V5 H2 Z M4 1 H6 V7 H4 Z M6 7 H12 V9 H6 Z M8 5 H10 V11 H8 Z" fill="#dcdcdc"/></svg>
<div class="t" style="left:977.90px;top:362.44px;font-size:12px;color:#f1f1f1;transform:scaleX(0.9814)">MilesLib</div>
<svg class="a" style="left:937px;top:380px" width="8" height="12" viewBox="0 0 8 12"><path d="M1.5 1.5 L6 6 L1.5 10.5 Z" fill="none" stroke="#f1f1f1" stroke-width="1.3"/></svg>
<svg class="a" style="left:958px;top:380px" width="14" height="12" viewBox="0 0 14 12"><rect x="0.5" y="0.5" width="13" height="11" fill="#1e1e1e" stroke="#c586c0"/><path d="M2 3 H8 V5 H2 Z M4 1 H6 V7 H4 Z M6 7 H12 V9 H6 Z M8 5 H10 V11 H8 Z" fill="#dcdcdc"/></svg>
<div class="t" style="left:977.90px;top:380.44px;font-size:12px;color:#f1f1f1;transform:scaleX(0.9284)">PRTerrainLib</div>
<svg class="a" style="left:937px;top:398px" width="8" height="12" viewBox="0 0 8 12"><path d="M1.5 1.5 L6 6 L1.5 10.5 Z" fill="none" stroke="#f1f1f1" stroke-width="1.3"/></svg>
<svg class="a" style="left:958px;top:398px" width="14" height="12" viewBox="0 0 14 12"><rect x="0.5" y="0.5" width="13" height="11" fill="#1e1e1e" stroke="#c586c0"/><path d="M2 3 H8 V5 H2 Z M4 1 H6 V7 H4 Z M6 7 H12 V9 H6 Z M8 5 H10 V11 H8 Z" fill="#dcdcdc"/></svg>
<div class="t" style="left:977.90px;top:398.44px;font-size:12px;color:#f1f1f1;transform:scaleX(0.9660)">ScriptLib</div>
<svg class="a" style="left:937px;top:416px" width="8" height="12" viewBox="0 0 8 12"><path d="M1.5 1.5 L6 6 L1.5 10.5 Z" fill="none" stroke="#f1f1f1" stroke-width="1.3"/></svg>
<svg class="a" style="left:958px;top:416px" width="14" height="12" viewBox="0 0 14 12"><rect x="0.5" y="0.5" width="13" height="11" fill="#1e1e1e" stroke="#c586c0"/><path d="M2 3 H8 V5 H2 Z M4 1 H6 V7 H4 Z M6 7 H12 V9 H6 Z M8 5 H10 V11 H8 Z" fill="#dcdcdc"/></svg>
<div class="t" style="left:977.90px;top:416.44px;font-size:12px;color:#f1f1f1;transform:scaleX(0.9260)">SpeedTreeLib</div>
<svg class="a" style="left:937px;top:434px" width="8" height="12" viewBox="0 0 8 12"><path d="M1.5 1.5 L6 6 L1.5 10.5 Z" fill="none" stroke="#f1f1f1" stroke-width="1.3"/></svg>
<svg class="a" style="left:958px;top:434px" width="14" height="12" viewBox="0 0 14 12"><rect x="0.5" y="0.5" width="13" height="11" fill="#1e1e1e" stroke="#c586c0"/><path d="M2 3 H8 V5 H2 Z M4 1 H6 V7 H4 Z M6 7 H12 V9 H6 Z M8 5 H10 V11 H8 Z" fill="#dcdcdc"/></svg>
<div class="t" style="left:977.90px;top:434.44px;font-size:12px;color:#f1f1f1;transform:scaleX(0.9358)">SphereLib</div>
<svg class="a" style="left:937px;top:452px" width="8" height="12" viewBox="0 0 8 12"><path d="M1.5 1.5 L6 6 L1.5 10.5 Z" fill="none" stroke="#f1f1f1" stroke-width="1.3"/></svg>
<svg class="a" style="left:958px;top:452px" width="14" height="12" viewBox="0 0 14 12"><rect x="0.5" y="0.5" width="13" height="11" fill="#1e1e1e" stroke="#c586c0"/><path d="M2 3 H8 V5 H2 Z M4 1 H6 V7 H4 Z M6 7 H12 V9 H6 Z M8 5 H10 V11 H8 Z" fill="#dcdcdc"/></svg>
<div class="t" style="left:977.90px;top:452.44px;font-size:12px;color:#f1f1f1;transform:scaleX(0.9510)">UserInterface</div>
<div class="a" style="left:926px;top:571px;width:100px;height:20px;background:#252526;border:1px solid #3f3f46;border-top:none"></div>
<div class="a" style="left:1026px;top:571px;width:248px;height:1px;background:#3f3f46"></div>
<div class="t" style="left:932.00px;top:575.14px;font-size:12px;color:#0097fb;transform:scaleX(0.9684)">Solution Explorer</div>
<div class="t" style="left:1032.50px;top:575.14px;font-size:12px;color:#f1f1f1;transform:scaleX(0.9436)">Team Explorer</div>
<div class="t" style="left:1116.30px;top:575.14px;font-size:12px;color:#f1f1f1;transform:scaleX(0.9216)">Class View</div>
<div class="a" style="left:926px;top:591px;width:348px;height:8px;background:#3f3f46"></div>
<div class="a" style="left:926px;top:599px;width:348px;height:366px;background:#2d2d30;border:1px solid #3f3f46;border-top:none"></div>
<div class="t" style="left:931.30px;top:603.84px;font-size:12px;color:#f1f1f1;transform:scaleX(0.9690)">Properties</div>
<svg class="a" style="left:992px;top:607px" width="226" height="5" viewBox="0 0 226 5"><rect x="0" y="0" width="1" height="1" fill="#4a4a4e"/><rect x="2" y="2" width="1" height="1" fill="#4a4a4e"/><rect x="0" y="4" width="1" height="1" fill="#4a4a4e"/><rect x="4" y="0" width="1" height="1" fill="#4a4a4e"/><rect x="6" y="2" width="1" height="1" fill="#4a4a4e"/><rect x="4" y="4" width="1" height="1" fill="#4a4a4e"/><rect x="8" y="0" width="1" height="1" fill="#4a4a4e"/><rect x="10" y="2" width="1" height="1" fill="#4a4a4e"/><rect x="8" y="4" width="1" height="1" fill="#4a4a4e"/><rect x="12" y="0" width="1" height="1" fill="#4a4a4e"/><rect x="14" y="2" width="1" height="1" fill="#4a4a4e"/><rect x="12" y="4" width="1" height="1" fill="#4a4a4e"/><rect x="16" y="0" width="1" height="1" fill="#4a4a4e"/><rect x="18" y="2" width="1" height="1" fill="#4a4a4e"/><rect x="16" y="4" width="1" height="1" fill="#4a4a4e"/><rect x="20" y="0" width="1" height="1" fill="#4a4a4e"/><rect x="22" y="2" width="1" height="1" fill="#4a4a4e"/><rect x="20" y="4" width="1" height="1" fill="#4a4a4e"/><rect x="24" y="0" width="1" height="1" fill="#4a4a4e"/><rect x="26" y="2" width="1" height="1" fill="#4a4a4e"/><rect x="24" y="4" width="1" height="1" fill="#4a4a4e"/><rect x="28" y="0" width="1" height="1" fill="#4a4a4e"/><rect x="30" y="2" width="1" height="1" fill="#4a4a4e"/><rect x="28" y="4" width="1" height="1" fill="#4a4a4e"/><rect x="32" y="0" width="1" height="1" fill="#4a4a4e"/><rect x="34" y="2" width="1" height="1" fill="#4a4a4e"/><rect x="32" y="4" width="1" height="1" fill="#4a4a4e"/><rect x="36" y="0" width="1" height="1" fill="#4a4a4e"/><rect x="38" y="2" width="1" height="1" fill="#4a4a4e"/><rect x="36" y="4" width="1" height="1" fill="#4a4a4e"/><rect x="40" y="0" width="1" height="1" fill="#4a4a4e"/><rect x="42" y="2" width="1" height="1" fill="#4a4a4e"/><rect x="40" y="4" width="1" height="1" fill="#4a4a4e"/><rect x="44" y="0" width="1" height="1" fill="#4a4a4e"/><rect x="46" y="2" width="1" height="1" fill="#4a4a4e"/><rect x="44" y="4" width="1" height="1" fill="#4a4a4e"/><rect x="48" y="0" width="1" height="1" fill="#4a4a4e"/><rect x="50" y="2" width="1" height="1" fill="#4a4a4e"/><rect x="48" y="4" width="1" height="1" fill="#4a4a4e"/><rect x="52" y="0" width="1" height="1" fill="#4a4a4e"/><rect x="54" y="2" width="1" height="1" fill="#4a4a4e"/><rect x="52" y="4" width="1" height="1" fill="#4a4a4e"/><rect x="56" y="0" width="1" height="1" fill="#4a4a4e"/><rect x="58" y="2" width="1" height="1" fill="#4a4a4e"/><rect x="56" y="4" width="1" height="1" fill="#4a4a4e"/><rect x="60" y="0" width="1" height="1" fill="#4a4a4e"/><rect x="62" y="2" width="1" height="1" fill="#4a4a4e"/><rect x="60" y="4" width="1" height="1" fill="#4a4a4e"/><rect x="64" y="0" width="1" height="1" fill="#4a4a4e"/><rect x="66" y="2" width="1" height="1" fill="#4a4a4e"/><rect x="64" y="4" width="1" height="1" fill="#4a4a4e"/><rect x="68" y="0" width="1" height="1" fill="#4a4a4e"/><rect x="70" y="2" width="1" height="1" fill="#4a4a4e"/><rect x="68" y="4" width="1" height="1" fill="#4a4a4e"/><rect x="72" y="0" width="1" height="1" fill="#4a4a4e"/><rect x="74" y="2" width="1" height="1" fill="#4a4a4e"/><rect x="72" y="4" width="1" height="1" fill="#4a4a4e"/><rect x="76" y="0" width="1" height="1" fill="#4a4a4e"/><rect x="78" y="2" width="1" height="1" fill="#4a4a4e"/><rect x="76" y="4" width="1" height="1" fill="#4a4a4e"/><rect x="80" y="0" width="1" height="1" fill="#4a4a4e"/><rect x="82" y="2" width="1" height="1" fill="#4a4a4e"/><rect x="80" y="4" width="1" height="1" fill="#4a4a4e"/><rect x="84" y="0" width="1" height="1" fill="#4a4a4e"/><rect x="86" y="2" width="1" height="1" fill="#4a4a4e"/><rect x="84" y="4" width="1" height="1" fill="#4a4a4e"/><rect x="88" y="0" width="1" height="1" fill="#4a4a4e"/><rect x="90" y="2" width="1" height="1" fill="#4a4a4e"/><rect x="88" y="4" width="1" height="1" fill="#4a4a4e"/><rect x="92" y="0" width="1" height="1" fill="#4a4a4e"/><rect x="94" y="2" width="1" height="1" fill="#4a4a4e"/><rect x="92" y="4" width="1" height="1" fill="#4a4a4e"/><rect x="96" y="0" width="1" height="1" fill="#4a4a4e"/><rect x="98" y="2" width="1" height="1" fill="#4a4a4e"/><rect x="96" y="4" width="1" height="1" fill="#4a4a4e"/><rect x="100" y="0" width="1" height="1" fill="#4a4a4e"/><rect x="102" y="2" width="1" height="1" fill="#4a4a4e"/><rect x="100" y="4" width="1" height="1" fill="#4a4a4e"/><rect x="104" y="0" width="1" height="1" fill="#4a4a4e"/><rect x="106" y="2" width="1" height="1" fill="#4a4a4e"/><rect x="104" y="4" width="1" height="1" fill="#4a4a4e"/><rect x="108" y="0" width="1" height="1" fill="#4a4a4e"/><rect x="110" y="2" width="1" height="1" fill="#4a4a4e"/><rect x="108" y="4" width="1" height="1" fill="#4a4a4e"/><rect x="112" y="0" width="1" height="1" fill="#4a4a4e"/><rect x="114" y="2" width="1" height="1" fill="#4a4a4e"/><rect x="112" y="4" width="1" height="1" fill="#4a4a4e"/><rect x="116" y="0" width="1" height="1" fill="#4a4a4e"/><rect x="118" y="2" width="1" height="1" fill="#4a4a4e"/><rect x="116" y="4" width="1" height="1" fill="#4a4a4e"/><rect x="120" y="0" width="1" height="1" fill="#4a4a4e"/><rect x="122" y="2" width="1" height="1" fill="#4a4a4e"/><rect x="120" y="4" width="1" height="1" fill="#4a4a4e"/><rect x="124" y="0" width="1" height="1" fill="#4a4a4e"/><rect x="126" y="2" width="1" height="1" fill="#4a4a4e"/><rect x="124" y="4" width="1" height="1" fill="#4a4a4e"/><rect x="128" y="0" width="1" height="1" fill="#4a4a4e"/><rect x="130" y="2" width="1" height="1" fill="#4a4a4e"/><rect x="128" y="4" width="1" height="1" fill="#4a4a4e"/><rect x="132" y="0" width="1" height="1" fill="#4a4a4e"/><rect x="134" y="2" width="1" height="1" fill="#4a4a4e"/><rect x="132" y="4" width="1" height="1" fill="#4a4a4e"/><rect x="136" y="0" width="1" height="1" fill="#4a4a4e"/><rect x="138" y="2" width="1" height="1" fill="#4a4a4e"/><rect x="136" y="4" width="1" height="1" fill="#4a4a4e"/><rect x="140" y="0" width="1" height="1" fill="#4a4a4e"/><rect x="142" y="2" width="1" height="1" fill="#4a4a4e"/><rect x="140" y="4" width="1" height="1" fill="#4a4a4e"/><rect x="144" y="0" width="1" height="1" fill="#4a4a4e"/><rect x="146" y="2" width="1" height="1" fill="#4a4a4e"/><rect x="144" y="4" width="1" height="1" fill="#4a4a4e"/><rect x="148" y="0" width="1" height="1" fill="#4a4a4e"/><rect x="150" y="2" width="1" height="1" fill="#4a4a4e"/><rect x="148" y="4" width="1" height="1" fill="#4a4a4e"/><rect x="152" y="0" width="1" height="1" fill="#4a4a4e"/><rect x="154" y="2" width="1" height="1" fill="#4a4a4e"/><rect x="152" y="4" width="1" height="1" fill="#4a4a4e"/><rect x="156" y="0" width="1" height="1" fill="#4a4a4e"/><rect x="158" y="2" width="1" height="1" fill="#4a4a4e"/><rect x="156" y="4" width="1" height="1" fill="#4a4a4e"/><rect x="160" y="0" width="1" height="1" fill="#4a4a4e"/><rect x="162" y="2" width="1" height="1" fill="#4a4a4e"/><rect x="160" y="4" width="1" height="1" fill="#4a4a4e"/><rect x="164" y="0" width="1" height="1" fill="#4a4a4e"/><rect x="166" y="2" width="1" height="1" fill="#4a4a4e"/><rect x="164" y="4" width="1" height="1" fill="#4a4a4e"/><rect x="168" y="0" width="1" height="1" fill="#4a4a4e"/><rect x="170" y="2" width="1" height="1" fill="#4a4a4e"/><rect x="168" y="4" width="1" height="1" fill="#4a4a4e"/><rect x="172" y="0" width="1" height="1" fill="#4a4a4e"/><rect x="174" y="2" width="1" height="1" fill="#4a4a4e"/><rect x="172" y="4" width="1" height="1" fill="#4a4a4e"/><rect x="176" y="0" width="1" height="1" fill="#4a4a4e"/><rect x="178" y="2" width="1" height="1" fill="#4a4a4e"/><rect x="176" y="4" width="1" height="1" fill="#4a4a4e"/><rect x="180" y="0" width="1" height="1" fill="#4a4a4e"/><rect x="182" y="2" width="1" height="1" fill="#4a4a4e"/><rect x="180" y="4" width="1" height="1" fill="#4a4a4e"/><rect x="184" y="0" width="1" height="1" fill="#4a4a4e"/><rect x="186" y="2" width="1" height="1" fill="#4a4a4e"/><rect x="184" y="4" width="1" height="1" fill="#4a4a4e"/><rect x="188" y="0" width="1" height="1" fill="#4a4a4e"/><rect x="190" y="2" width="1" height="1" fill="#4a4a4e"/><rect x="188" y="4" width="1" height="1" fill="#4a4a4e"/><rect x="192" y="0" width="1" height="1" fill="#4a4a4e"/><rect x="194" y="2" width="1" height="1" fill="#4a4a4e"/><rect x="192" y="4" width="1" height="1" fill="#4a4a4e"/><rect x="196" y="0" width="1" height="1" fill="#4a4a4e"/><rect x="198" y="2" width="1" height="1" fill="#4a4a4e"/><rect x="196" y="4" width="1" height="1" fill="#4a4a4e"/><rect x="200" y="0" width="1" height="1" fill="#4a4a4e"/><rect x="202" y="2" width="1" height="1" fill="#4a4a4e"/><rect x="200" y="4" width="1" height="1" fill="#4a4a4e"/><rect x="204" y="0" width="1" height="1" fill="#4a4a4e"/><rect x="206" y="2" width="1" height="1" fill="#4a4a4e"/><rect x="204" y="4" width="1" height="1" fill="#4a4a4e"/><rect x="208" y="0" width="1" height="1" fill="#4a4a4e"/><rect x="210" y="2" width="1" height="1" fill="#4a4a4e"/><rect x="208" y="4" width="1" height="1" fill="#4a4a4e"/><rect x="212" y="0" width="1" height="1" fill="#4a4a4e"/><rect x="214" y="2" width="1" height="1" fill="#4a4a4e"/><rect x="212" y="4" width="1" height="1" fill="#4a4a4e"/><rect x="216" y="0" width="1" height="1" fill="#4a4a4e"/><rect x="218" y="2" width="1" height="1" fill="#4a4a4e"/><rect x="216" y="4" width="1" height="1" fill="#4a4a4e"/><rect x="220" y="0" width="1" height="1" fill="#4a4a4e"/><rect x="222" y="2" width="1" height="1" fill="#4a4a4e"/><rect x="220" y="4" width="1" height="1" fill="#4a4a4e"/><rect x="224" y="0" width="1" height="1" fill="#4a4a4e"/><rect x="226" y="2" width="1" height="1" fill="#4a4a4e"/><rect x="224" y="4" width="1" height="1" fill="#4a4a4e"/></svg>
<svg class="a" style="left:1225px;top:606px" width="9" height="5" viewBox="0 0 9 5"><path d="M0.5 0.5 H8.5 L4.5 4.5 Z" fill="#f1f1f1"/></svg>
<svg class="a" style="left:1242px;top:603px" width="8" height="11" viewBox="0 0 8 11"><path d="M1.5 0.5 H6.5 V6 H1.5 Z" fill="none" stroke="#f1f1f1"/><rect x="1" y="0" width="3" height="6" fill="#f1f1f1"/><path d="M0 6.5 H8 M4 7 V11" stroke="#f1f1f1"/></svg>
<svg class="a" style="left:1256.5px;top:603.5px" width="11" height="10" viewBox="0 0 11 10"><path d="M1 1 L10 9 M10 1 L1 9" stroke="#f1f1f1" stroke-width="1.5"/></svg>
<div class="a" style="left:927px;top:620px;width:346px;height:24px;background:#333337"></div>
<svg class="a" style="left:1263px;top:631px" width="7" height="4" viewBox="0 0 7 4"><path d="M0 0 H6 L3 3 Z" fill="#f1f1f1"/></svg>
<div class="a" style="left:930px;top:646px;width:23px;height:22px;border:1px solid #3399ff"></div>
<svg class="a" style="left:932px;top:648px" width="20" height="19" viewBox="932 648 20 19"><rect x="934" y="650" width="5" height="5" fill="#d8d8d8"/><rect x="934" y="659" width="5" height="5" fill="#d8d8d8"/><path d="M935.5 652.5 H937.5 M936.5 651.5 V653.5 M935.5 661.5 H937.5 M936.5 660.5 V662.5" stroke="#2d2d30"/><path d="M940 650.5 H945 M940 652.5 H945 M940 654.5 H945 M940 656.5 H945 M940 658.5 H945 M940 661 H945 M940 663.5 H945" stroke="#d8d8d8"/><path d="M946 652.5 H948 M946 654.5 H948 M946 656.5 H948 M946 658.5 H948 M946 663.5 H948" stroke="#d8d8d8"/></svg>
<svg class="a" style="left:956px;top:648px" width="18" height="19" viewBox="956 648 18 19"><rect x="957" y="650" width="7" height="7" fill="#d0d0d0"/><path d="M958.5 656 L960.5 651 L962.5 656 M959.3 654.3 H961.7" stroke="#2d2d30" fill="none" stroke-width="1"/><path d="M958 659.5 H963 L958 663.5 H963" stroke="#d0d0d0" stroke-width="1.6" fill="none"/><path d="M968 653 V660" stroke="#75beff" stroke-width="2"/><path d="M965 658.5 L968 662.5 L971 658.5 Z" fill="#75beff"/></svg>
<div class="a" style="left:979px;top:648px;width:1px;height:20px;background:#3f3f46"></div>
<svg class="a" style="left:984px;top:649px" width="17" height="16" viewBox="984 649 17 16"><path d="M987 663 L993 657" stroke="#6a6a6a" stroke-width="3.2" stroke-linecap="round"/><circle cx="995.5" cy="654.5" r="4.3" fill="#6a6a6a"/><path d="M996 654 L999.5 650.5" stroke="#2d2d30" stroke-width="2.2"/></svg>
<div class="a" style="left:927px;top:671px;width:346px;height:293px;background:#252526"></div>
<div class="a" style="left:927px;top:901px;width:346px;height:1px;background:#3f3f46"></div>
<div class="a" style="left:0px;top:971px;width:1280px;height:23px;background:#007acc"></div>
<div class="t" style="left:5.00px;top:976.84px;font-size:12px;color:#ffffff;transform:scaleX(0.8937)">Ready</div>
<div class="t" style="left:926.60px;top:976.84px;font-size:12px;color:#ffffff;transform:scaleX(0.9060)">Ln 11</div>
<div class="a" style="left:0;top:994px;width:1280px;height:30px;background:#05070a"></div>
<svg class="a" style="left:0px;top:994px" width="1280" height="30" viewBox="0 0 1280 30"><rect x="663" y="30" width="1" height="2" fill="#202a36"/><rect x="98" y="2" width="1" height="2" fill="#1a2530"/><rect x="118" y="29" width="1" height="1" fill="#202a36"/><rect x="888" y="13" width="1" height="1" fill="#1a2530"/><rect x="1128" y="13" width="2" height="1" fill="#1a2530"/><rect x="457" y="20" width="2" height="2" fill="#1a2530"/><rect x="812" y="1" width="1" height="2" fill="#202a36"/><rect x="272" y="9" width="1" height="2" fill="#151c24"/><rect x="241" y="18" width="2" height="2" fill="#2a3440"/><rect x="370" y="3" width="1" height="1" fill="#202a36"/><rect x="1121" y="22" width="2" height="1" fill="#1a2530"/><rect x="1267" y="6" width="2" height="2" fill="#151c24"/><rect x="875" y="24" width="1" height="2" fill="#2a3440"/><rect x="928" y="11" width="1" height="1" fill="#2a3440"/><rect x="499" y="2" width="2" height="1" fill="#2a3440"/><rect x="703" y="23" width="1" height="2" fill="#151c24"/><rect x="149" y="3" width="1" height="1" fill="#151c24"/><rect x="311" y="29" width="1" height="1" fill="#151c24"/><rect x="158" y="24" width="1" height="2" fill="#2a3440"/><rect x="717" y="19" width="2" height="1" fill="#151c24"/><rect x="140" y="26" width="1" height="1" fill="#1a2530"/><rect x="133" y="1" width="2" height="2" fill="#2a3440"/><rect x="912" y="9" width="2" height="1" fill="#151c24"/><rect x="46" y="30" width="1" height="1" fill="#151c24"/><rect x="1251" y="3" width="1" height="1" fill="#151c24"/><rect x="588" y="4" width="1" height="1" fill="#202a36"/><rect x="1016" y="2" width="1" height="1" fill="#202a36"/><rect x="1125" y="8" width="1" height="2" fill="#202a36"/><rect x="570" y="22" width="1" height="2" fill="#151c24"/><rect x="779" y="30" width="1" height="1" fill="#202a36"/><rect x="360" y="4" width="2" height="1" fill="#202a36"/><rect x="24" y="15" width="1" height="1" fill="#202a36"/><rect x="8" y="4" width="2" height="1" fill="#151c24"/><rect x="1248" y="18" width="1" height="2" fill="#2a3440"/><rect x="1055" y="30" width="1" height="2" fill="#1a2530"/><rect x="1145" y="12" width="1" height="1" fill="#151c24"/><rect x="212" y="15" width="1" height="1" fill="#151c24"/><rect x="137" y="6" width="1" height="1" fill="#151c24"/><rect x="696" y="19" width="1" height="1" fill="#1a2530"/><rect x="1160" y="4" width="1" height="2" fill="#1a2530"/><rect x="52" y="2" width="2" height="1" fill="#202a36"/><rect x="304" y="20" width="1" height="2" fill="#2a3440"/><rect x="745" y="15" width="1" height="1" fill="#1a2530"/><rect x="954" y="15" width="1" height="1" fill="#151c24"/><rect x="295" y="3" width="2" height="1" fill="#2a3440"/><rect x="980" y="26" width="2" height="1" fill="#202a36"/><rect x="420" y="30" width="1" height="2" fill="#2a3440"/><rect x="1112" y="29" width="2" height="1" fill="#1a2530"/><rect x="186" y="22" width="2" height="1" fill="#2a3440"/><rect x="342" y="11" width="2" height="2" fill="#202a36"/><rect x="1029" y="10" width="2" height="1" fill="#202a36"/><rect x="490" y="26" width="2" height="1" fill="#151c24"/><rect x="409" y="16" width="1" height="2" fill="#151c24"/><rect x="59" y="0" width="1" height="1" fill="#2a3440"/><rect x="396" y="22" width="1" height="2" fill="#2a3440"/><rect x="715" y="30" width="1" height="1" fill="#2a3440"/><rect x="209" y="7" width="1" height="1" fill="#151c24"/><rect x="418" y="15" width="1" height="2" fill="#1a2530"/><rect x="704" y="25" width="2" height="1" fill="#1a2530"/><rect x="795" y="25" width="1" height="1" fill="#202a36"/><rect x="888" y="25" width="1" height="2" fill="#2a3440"/><rect x="810" y="14" width="2" height="1" fill="#151c24"/><rect x="325" y="5" width="1" height="1" fill="#202a36"/><rect x="1209" y="28" width="2" height="1" fill="#151c24"/><rect x="1252" y="26" width="2" height="1" fill="#151c24"/><rect x="319" y="17" width="1" height="1" fill="#202a36"/><rect x="210" y="16" width="1" height="1" fill="#202a36"/><rect x="432" y="0" width="1" height="1" fill="#2a3440"/><rect x="1026" y="7" width="1" height="2" fill="#2a3440"/><rect x="858" y="26" width="1" height="2" fill="#202a36"/><rect x="724" y="28" width="2" height="2" fill="#151c24"/><rect x="1058" y="13" width="2" height="1" fill="#202a36"/><rect x="1072" y="16" width="1" height="1" fill="#1a2530"/><rect x="1246" y="0" width="1" height="1" fill="#202a36"/><rect x="969" y="19" width="2" height="1" fill="#1a2530"/><rect x="667" y="21" width="1" height="2" fill="#151c24"/><rect x="116" y="7" width="1" height="1" fill="#202a36"/><rect x="200" y="16" width="2" height="1" fill="#151c24"/><rect x="129" y="14" width="2" height="2" fill="#2a3440"/><rect x="1241" y="16" width="2" height="1" fill="#202a36"/><rect x="926" y="16" width="2" height="1" fill="#151c24"/><rect x="1071" y="28" width="2" height="1" fill="#2a3440"/><rect x="916" y="4" width="1" height="1" fill="#151c24"/><rect x="905" y="10" width="2" height="1" fill="#1a2530"/><rect x="877" y="2" width="2" height="1" fill="#202a36"/><rect x="250" y="28" width="2" height="2" fill="#202a36"/><rect x="749" y="4" width="1" height="1" fill="#2a3440"/><rect x="449" y="23" width="1" height="1" fill="#1a2530"/><rect x="333" y="21" width="1" height="2" fill="#202a36"/><rect x="883" y="16" width="1" height="1" fill="#151c24"/><rect x="400" y="11" width="1" height="2" fill="#2a3440"/><rect x="749" y="0" width="2" height="1" fill="#2a3440"/><rect x="902" y="22" width="1" height="1" fill="#1a2530"/><rect x="1059" y="19" width="2" height="1" fill="#2a3440"/><rect x="231" y="29" width="1" height="1" fill="#202a36"/><rect x="543" y="8" width="1" height="1" fill="#1a2530"/><rect x="265" y="26" width="2" height="1" fill="#151c24"/><rect x="831" y="4" width="2" height="1" fill="#151c24"/><rect x="183" y="8" width="2" height="1" fill="#1a2530"/><rect x="871" y="28" width="1" height="1" fill="#1a2530"/><rect x="181" y="25" width="1" height="2" fill="#2a3440"/><rect x="455" y="2" width="1" height="1" fill="#2a3440"/><rect x="23" y="10" width="1" height="2" fill="#151c24"/><rect x="264" y="1" width="1" height="1" fill="#202a36"/><rect x="536" y="1" width="1" height="1" fill="#202a36"/><rect x="624" y="16" width="1" height="1" fill="#202a36"/><rect x="1024" y="21" width="1" height="1" fill="#202a36"/><rect x="37" y="8" width="1" height="1" fill="#1a2530"/><rect x="1035" y="17" width="2" height="1" fill="#202a36"/><rect x="503" y="29" width="1" height="2" fill="#151c24"/><rect x="885" y="21" width="2" height="1" fill="#151c24"/><rect x="1037" y="9" width="1" height="1" fill="#202a36"/><rect x="406" y="26" width="1" height="1" fill="#202a36"/><rect x="111" y="26" width="1" height="1" fill="#202a36"/><rect x="1280" y="23" width="1" height="1" fill="#2a3440"/><rect x="113" y="2" width="2" height="2" fill="#151c24"/><rect x="577" y="19" width="2" height="1" fill="#202a36"/><rect x="92" y="14" width="1" height="1" fill="#202a36"/><rect x="913" y="0" width="1" height="1" fill="#2a3440"/><rect x="1120" y="10" width="1" height="1" fill="#202a36"/><rect x="446" y="11" width="1" height="1" fill="#202a36"/><rect x="781" y="2" width="1" height="2" fill="#151c24"/><rect x="411" y="7" width="1" height="1" fill="#1a2530"/><rect x="183" y="4" width="2" height="1" fill="#151c24"/><rect x="806" y="0" width="1" height="2" fill="#2a3440"/><rect x="476" y="2" width="2" height="2" fill="#202a36"/><rect x="1221" y="12" width="2" height="1" fill="#2a3440"/><rect x="306" y="9" width="1" height="2" fill="#202a36"/><rect x="1050" y="20" width="2" height="2" fill="#151c24"/><rect x="1035" y="4" width="2" height="2" fill="#1a2530"/><rect x="470" y="2" width="1" height="1" fill="#1a2530"/><rect x="738" y="30" width="1" height="1" fill="#1a2530"/><rect x="1143" y="1" width="2" height="2" fill="#1a2530"/><rect x="500" y="15" width="1" height="1" fill="#2a3440"/><rect x="143" y="23" width="2" height="2" fill="#1a2530"/><rect x="135" y="23" width="1" height="1" fill="#151c24"/><rect x="543" y="7" width="1" height="2" fill="#202a36"/><rect x="942" y="15" width="1" height="1" fill="#151c24"/><rect x="588" y="24" width="2" height="2" fill="#1a2530"/><rect x="406" y="2" width="1" height="1" fill="#202a36"/></svg>
<svg class="a" style="left:10px;top:1001px" width="17" height="17" viewBox="0 0 17 17"><path d="M0 2.3 L6.8 1.4 V8 H0 Z M7.8 1.2 L16.5 0 V8 H7.8 Z M0 9 H6.8 V15.6 L0 14.7 Z M7.8 9 H16.5 V17 L7.8 15.8 Z" fill="#fff"/></svg>
<svg class="a" style="left:45px;top:1000px" width="18" height="18" viewBox="0 0 18 18"><circle cx="10.5" cy="6.5" r="5.5" fill="none" stroke="#fff" stroke-width="1.3"/><path d="M6.5 10.5 L1 16" stroke="#fff" stroke-width="1.5"/></svg>
<svg class="a" style="left:83px;top:1000px" width="18" height="18" viewBox="0 0 18 18"><circle cx="9" cy="9" r="8" fill="#db4437"/><path d="M9 9 L2.1 13 A8 8 0 0 0 13 15.93 Z" fill="#0f9d58"/><path d="M9 9 L13 15.93 A8 8 0 0 0 9 1 H9 L16 5 Z" fill="#ffcd40"/><path d="M9 9 L16.93 5 A8 8 0 0 1 13 15.93 Z" fill="#ffcd40"/><circle cx="9" cy="9" r="3.8" fill="#fff"/><circle cx="9" cy="9" r="3" fill="#4285f4"/></svg>
<div class="a" style="left:78px;top:1022px;width:28px;height:2px;background:#76b9ed"></div>
<div class="a" style="left:111px;top:994px;width:36px;height:30px;background:#96501e"></div>
<div class="a" style="left:111px;top:1022px;width:36px;height:2px;background:#f7630c"></div>
<svg class="a" style="left:119px;top:999px" width="20" height="20" viewBox="0 0 20 20"><circle cx="6" cy="6" r="4.5" fill="#00aff0"/><circle cx="14" cy="14" r="4.5" fill="#00aff0"/><circle cx="10" cy="10" r="7.5" fill="#00aff0"/><text x="10" y="14.5" text-anchor="middle" font-family="Liberation Sans" font-weight="bold" font-size="12" fill="#fff">S</text></svg>
<svg class="a" style="left:155px;top:999px" width="22" height="20" viewBox="0 0 22 20"><path d="M15 1 L20.5 3.5 V16.5 L15 19 L7 12 L3.5 14.8 L1.5 13.8 V6.2 L3.5 5.2 L7 8 Z M15 5.8 L10.5 10 L15 14.2 Z M3.5 7.8 V12.2 L5.6 10 Z" fill="#68217a" stroke="#fff" stroke-width="1.3" stroke-linejoin="round" fill-rule="evenodd"/></svg>
<div class="a" style="left:152px;top:1022px;width:28px;height:2px;background:#76b9ed"></div>
<svg class="a" style="left:1073px;top:1004px" width="14" height="9" viewBox="0 0 14 9"><path d="M1 7.5 L7 1.5 L13 7.5" fill="none" stroke="#fff" stroke-width="1.3"/></svg>
<svg class="a" style="left:1098px;top:1002px" width="14" height="14" viewBox="0 0 14 14"><path d="M1 13 A12 12 0 0 1 13 1 M4 13 A9 9 0 0 1 13 4 M7 13 A6 6 0 0 1 13 7" fill="none" stroke="#e0e0e0" stroke-width="1"/><rect x="10" y="10" width="3" height="3" fill="#fff"/></svg>
<svg class="a" style="left:1119px;top:1002px" width="18" height="16" viewBox="0 0 18 16"><path d="M1 5.5 H4 L8.5 1.5 V14.5 L4 10.5 H1 Z" fill="none" stroke="#fff" stroke-width="1.1"/><path d="M11 5 Q12.5 8 11 11 M13.5 3 Q16 8 13.5 13" fill="none" stroke="#fff" stroke-width="1.1"/></svg>
<svg class="a" style="left:1143px;top:1001px" width="18" height="17" viewBox="0 0 18 17"><rect x="0.5" y="0.5" width="15" height="12" fill="none" stroke="#fff"/><path d="M3 3.5 H13 M3 6 H10 M3 8.5 H8" stroke="#fff"/><circle cx="13" cy="12.5" r="3.6" fill="#05070a" stroke="#fff"/><path d="M11 12.5 H15" stroke="#fff"/></svg>
<div class="t" style="left:1170.00px;top:1002.54px;font-size:12px;color:#ffffff;transform:scaleX(0.8888)">ROU</div>
<div class="t" style="left:1224.00px;top:1002.54px;font-size:12px;color:#ffffff;transform:scaleX(0.9197)">11:32</div>
<div class="a" style="left:1275px;top:994px;width:1px;height:30px;background:#3a3a3a"></div>
<div class="a" style="left:1019px;top:821px;width:260px;height:173px;background:#000000"></div>
<div class="a" style="left:1020px;top:822px;width:258px;height:25px;background:#262626"></div>
<svg class="a" style="left:1026px;top:823px" width="42" height="22" viewBox="0 0 42 22"><text x="3" y="15" font-family="Liberation Sans" font-size="15" fill="#1a1a1a" stroke="#fff" stroke-width="3.2" stroke-linejoin="round" paint-order="stroke" letter-spacing="-0.9">skype</text></svg>
<svg class="a" style="left:1252px;top:825px" width="18" height="18" viewBox="0 0 18 18"><circle cx="9" cy="9" r="8.5" fill="#d4d4d4"/><path d="M6 6 L12 12 M12 6 L6 12" stroke="#2b2b2b" stroke-width="2"/></svg>
<div class="a" style="left:1020px;top:847px;width:258px;height:1px;background:#d92020"></div>
<div class="a" style="left:1020px;top:848px;width:258px;height:5px;background:#e4e4e4"></div>
<svg class="a" style="left:1020px;top:848px" width="258" height="5" viewBox="0 0 258 5"><rect x="4" y="1" width="2" height="3" fill="#777"/><rect x="7" y="2" width="22" height="1" fill="#aaa"/><rect x="37" y="1" width="2" height="3" fill="#c33"/><rect x="40" y="2" width="22" height="1" fill="#aaa"/><rect x="72" y="1" width="2" height="3" fill="#c33"/><rect x="75" y="2" width="22" height="1" fill="#aaa"/><rect x="107" y="1" width="2" height="3" fill="#777"/><rect x="110" y="2" width="22" height="1" fill="#aaa"/><rect x="143" y="1" width="2" height="3" fill="#777"/><rect x="146" y="2" width="22" height="1" fill="#aaa"/><rect x="180" y="1" width="2" height="3" fill="#333"/><rect x="183" y="2" width="22" height="1" fill="#aaa"/></svg>
<div class="a" style="left:1020px;top:853px;width:258px;height:6px;background:#f8f8f8"></div>
<svg class="a" style="left:1020px;top:853px" width="258" height="6" viewBox="0 0 258 6"><rect x="3" y="2" width="14" height="2" fill="#888"/><rect x="22" y="2.5" width="165" height="1" fill="#999"/><rect x="250" y="2" width="5" height="2" fill="#888"/></svg>
<div class="a" style="left:1020px;top:859px;width:34px;height:120px;background:#2b2b2b"></div>
<div class="a" style="left:1054px;top:859px;width:2px;height:120px;background:#ffffff"></div>
<div class="a" style="left:1056px;top:859px;width:37px;height:120px;background:#e6e6e6"></div>
<div class="a" style="left:1093px;top:859px;width:146px;height:120px;background:#ededed"></div>
<div class="a" style="left:1238px;top:859px;width:3px;height:120px;background:#ffffff"></div>
<div class="a" style="left:1241px;top:859px;width:34px;height:120px;background:#2b2b2b"></div>
<div class="a" style="left:1275px;top:859px;width:3px;height:120px;background:#f0f0f0"></div>
<div class="a" style="left:1276px;top:900px;width:2px;height:10px;background:#bbb"></div>
<div class="a" style="left:1094px;top:859px;width:141px;height:7px;background:linear-gradient(90deg,#5a3a26,#4f5e2c 25%,#46602a 60%,#4e5428 85%,#5a3a2a)"></div>
<div class="a" style="left:1093px;top:873px;width:146px;height:1px;background:#c4c4c4"></div>
<svg class="a" style="left:1020px;top:859px" width="258" height="120" viewBox="0 0 258 120"><rect x="74" y="10.5" width="12" height="1.3" fill="#888"/><rect x="86" y="10.5" width="7" height="1.3" fill="#e03030"/><rect x="73" y="17.5" width="30" height="1.3" fill="#222"/><rect x="104" y="17.5" width="7" height="1.3" fill="#3040e0"/><rect x="73" y="23.5" width="20" height="1.3" fill="#111"/><rect x="94" y="23.5" width="8" height="1.3" fill="#30c8e0"/><rect x="103" y="23.5" width="18" height="1.3" fill="#222"/><rect x="73" y="29" width="8" height="1.3" fill="#555"/><rect x="73" y="34.5" width="13" height="1.3" fill="#e02020"/><rect x="76" y="45.5" width="12" height="1.3" fill="#777"/><rect x="76" y="50.5" width="22" height="1.3" fill="#555"/><rect x="75" y="66.5" width="74" height="1.3" fill="#555"/><rect x="108" y="71.5" width="6" height="1.3" fill="#666"/><rect x="73" y="79.5" width="76" height="1.3" fill="#888"/><rect x="204" y="57.5" width="7" height="1.3" fill="#40b8d8"/></svg>
<div class="a" style="left:1093px;top:898px;width:12px;height:5px;background:#1a1a1a"></div>
<div class="a" style="left:1094px;top:903px;width:145px;height:10px;background:#e6e6e6"></div>
<div class="a" style="left:1093px;top:913px;width:146px;height:1px;background:#bdbdbd"></div>
<svg class="a" style="left:1094px;top:915px" width="48" height="9"><rect x="1" y="1.5" width="45" height="5.5" fill="#111" opacity="0.0"/><text x="1" y="7.5" font-family="Liberation Sans" font-weight="bold" font-size="8" fill="#151515" textLength="45" lengthAdjust="spacingAndGlyphs">Start Download</text></svg>
<div class="a" style="left:1182px;top:919px;width:15px;height:11px;background:#444444"></div>
<div class="a" style="left:1187px;top:922px;width:4px;height:4px;background:#e0e0e0"></div>
<div class="a" style="left:1093px;top:936px;width:146px;height:1px;background:#d0d0d0"></div>
<div class="a" style="left:1056px;top:941px;width:183px;height:7px;background:#e2e2e2"></div>
<div class="a" style="left:1054px;top:948px;width:187px;height:2px;background:#ffffff"></div>
<div class="a" style="left:1056px;top:950px;width:37px;height:28px;background:#e6e6e6"></div>
<div class="a" style="left:1093px;top:950px;width:146px;height:28px;background:#efefef"></div>
<svg class="a" style="left:1020px;top:859px" width="258" height="120" viewBox="0 0 258 120"><rect x="74.0" y="93.0" width="6" height="1" fill="#555"/><rect x="82.0" y="93.0" width="8" height="1" fill="#555"/><rect x="94.0" y="93.0" width="13" height="1" fill="#555"/><rect x="108.0" y="93.0" width="12" height="1" fill="#777"/><rect x="124.0" y="93.0" width="7" height="1" fill="#555"/><rect x="133.0" y="93.0" width="6" height="1" fill="#aaa"/><rect x="143.0" y="93.0" width="11" height="1" fill="#555"/><rect x="158.0" y="93.0" width="9" height="1" fill="#aaa"/><rect x="169.0" y="93.0" width="6" height="1" fill="#aaa"/><rect x="177.0" y="93.0" width="11" height="1" fill="#6f94d8"/><rect x="189.0" y="93.0" width="13" height="1" fill="#777"/><rect x="204.0" y="93.0" width="12" height="1" fill="#777"/><rect x="74.0" y="96.3" width="3" height="1" fill="#999"/><rect x="81.0" y="96.3" width="12" height="1" fill="#aaa"/><rect x="97.0" y="96.3" width="14" height="1" fill="#6f94d8"/><rect x="115.0" y="96.3" width="14" height="1" fill="#555"/><rect x="133.0" y="96.3" width="5" height="1" fill="#999"/><rect x="139.0" y="96.3" width="3" height="1" fill="#888"/><rect x="146.0" y="96.3" width="6" height="1" fill="#999"/><rect x="156.0" y="96.3" width="13" height="1" fill="#999"/><rect x="173.0" y="96.3" width="11" height="1" fill="#6f94d8"/><rect x="187.0" y="96.3" width="11" height="1" fill="#555"/><rect x="202.0" y="96.3" width="12" height="1" fill="#888"/><rect x="74.0" y="99.6" width="13" height="1" fill="#777"/><rect x="90.0" y="99.6" width="12" height="1" fill="#aaa"/><rect x="104.0" y="99.6" width="14" height="1" fill="#999"/><rect x="119.0" y="99.6" width="14" height="1" fill="#aaa"/><rect x="135.0" y="99.6" width="13" height="1" fill="#555"/><rect x="151.0" y="99.6" width="7" height="1" fill="#777"/><rect x="159.0" y="99.6" width="10" height="1" fill="#aaa"/><rect x="173.0" y="99.6" width="4" height="1" fill="#999"/><rect x="178.0" y="99.6" width="9" height="1" fill="#888"/><rect x="188.0" y="99.6" width="7" height="1" fill="#6f94d8"/><rect x="199.0" y="99.6" width="4" height="1" fill="#777"/><rect x="204.0" y="99.6" width="9" height="1" fill="#aaa"/><rect x="74.0" y="102.9" width="11" height="1" fill="#999"/><rect x="87.0" y="102.9" width="3" height="1" fill="#999"/><rect x="91.0" y="102.9" width="4" height="1" fill="#777"/><rect x="96.0" y="102.9" width="6" height="1" fill="#6f94d8"/><rect x="105.0" y="102.9" width="12" height="1" fill="#999"/><rect x="119.0" y="102.9" width="14" height="1" fill="#777"/><rect x="136.0" y="102.9" width="8" height="1" fill="#999"/><rect x="146.0" y="102.9" width="9" height="1" fill="#6f94d8"/><rect x="159.0" y="102.9" width="11" height="1" fill="#6f94d8"/><rect x="171.0" y="102.9" width="12" height="1" fill="#555"/><rect x="186.0" y="102.9" width="9" height="1" fill="#aaa"/><rect x="197.0" y="102.9" width="7" height="1" fill="#6f94d8"/><rect x="74.0" y="106.2" width="11" height="1" fill="#999"/><rect x="88.0" y="106.2" width="3" height="1" fill="#6f94d8"/><rect x="94.0" y="106.2" width="3" height="1" fill="#6f94d8"/><rect x="99.0" y="106.2" width="3" height="1" fill="#aaa"/><rect x="105.0" y="106.2" width="10" height="1" fill="#999"/><rect x="118.0" y="106.2" width="12" height="1" fill="#aaa"/><rect x="133.0" y="106.2" width="14" height="1" fill="#6f94d8"/><rect x="148.0" y="106.2" width="12" height="1" fill="#777"/><rect x="161.0" y="106.2" width="8" height="1" fill="#999"/><rect x="173.0" y="106.2" width="7" height="1" fill="#555"/><rect x="183.0" y="106.2" width="5" height="1" fill="#999"/><rect x="190.0" y="106.2" width="8" height="1" fill="#999"/><rect x="201.0" y="106.2" width="7" height="1" fill="#6f94d8"/><rect x="74.0" y="109.5" width="3" height="1" fill="#555"/><rect x="79.0" y="109.5" width="7" height="1" fill="#555"/><rect x="88.0" y="109.5" width="13" height="1" fill="#999"/><rect x="103.0" y="109.5" width="8" height="1" fill="#888"/><rect x="115.0" y="109.5" width="13" height="1" fill="#aaa"/><rect x="129.0" y="109.5" width="4" height="1" fill="#555"/><rect x="136.0" y="109.5" width="8" height="1" fill="#aaa"/><rect x="146.0" y="109.5" width="10" height="1" fill="#888"/><rect x="157.0" y="109.5" width="8" height="1" fill="#aaa"/><rect x="167.0" y="109.5" width="12" height="1" fill="#6f94d8"/><rect x="182.0" y="109.5" width="6" height="1" fill="#777"/><rect x="189.0" y="109.5" width="11" height="1" fill="#888"/><rect x="203.0" y="109.5" width="12" height="1" fill="#888"/><rect x="74.0" y="112.8" width="8" height="1" fill="#aaa"/><rect x="83.0" y="112.8" width="12" height="1" fill="#999"/><rect x="97.0" y="112.8" width="9" height="1" fill="#999"/><rect x="109.0" y="112.8" width="10" height="1" fill="#999"/><rect x="123.0" y="112.8" width="7" height="1" fill="#6f94d8"/><rect x="134.0" y="112.8" width="3" height="1" fill="#6f94d8"/><rect x="139.0" y="112.8" width="6" height="1" fill="#777"/><rect x="149.0" y="112.8" width="12" height="1" fill="#555"/><rect x="165.0" y="112.8" width="11" height="1" fill="#aaa"/><rect x="178.0" y="112.8" width="3" height="1" fill="#aaa"/><rect x="185.0" y="112.8" width="13" height="1" fill="#aaa"/><rect x="201.0" y="112.8" width="11" height="1" fill="#999"/><rect x="74.0" y="116.1" width="4" height="1" fill="#555"/><rect x="81.0" y="116.1" width="4" height="1" fill="#888"/><rect x="86.0" y="116.1" width="3" height="1" fill="#aaa"/><rect x="91.0" y="116.1" width="9" height="1" fill="#555"/><rect x="101.0" y="116.1" width="3" height="1" fill="#6f94d8"/><rect x="105.0" y="116.1" width="5" height="1" fill="#555"/><rect x="113.0" y="116.1" width="6" height="1" fill="#aaa"/><rect x="120.0" y="116.1" width="11" height="1" fill="#555"/><rect x="135.0" y="116.1" width="3" height="1" fill="#555"/><rect x="139.0" y="116.1" width="8" height="1" fill="#888"/><rect x="150.0" y="116.1" width="11" height="1" fill="#6f94d8"/><rect x="162.0" y="116.1" width="8" height="1" fill="#888"/><rect x="172.0" y="116.1" width="4" height="1" fill="#555"/><rect x="177.0" y="116.1" width="5" height="1" fill="#888"/><rect x="185.0" y="116.1" width="5" height="1" fill="#777"/><rect x="194.0" y="116.1" width="13" height="1" fill="#555"/></svg>
<svg class="a" style="left:1126px;top:940px" width="44" height="44"><circle cx="22" cy="22" r="21" fill="#a8a8a8" opacity="0.4"/><path d="M8 36 L36 8" stroke="#fff" stroke-width="2.5"/><path d="M20 12 V26 M16 22 L20 30 L24 22" stroke="#fff" stroke-width="2" fill="none" opacity="0.7"/></svg>
<div class="a" style="left:1020px;top:978px;width:258px;height:9px;background:#e9e9e9"></div>
<svg class="a" style="left:1020px;top:978px" width="258" height="9" viewBox="0 0 258 9"><rect x="2" y="3" width="3" height="3" fill="#a33"/><rect x="8" y="4" width="10" height="1" fill="#777"/><rect x="24" y="3" width="3" height="3" fill="#4a4"/><rect x="30" y="4" width="20" height="1" fill="#777"/><rect x="200" y="4" width="45" height="1" fill="#888"/></svg>
<div class="a" style="left:1020px;top:987px;width:258px;height:6px;background:#0a0a0a"></div>
<svg class="a" style="left:1020px;top:987px" width="258" height="6" viewBox="0 0 258 6"><rect x="3" y="1" width="3" height="3" fill="#fff"/><rect x="12" y="1" width="3" height="3" fill="#bbb"/><rect x="20" y="1" width="3" height="3" fill="#bbb"/><rect x="28" y="1" width="3" height="3" fill="#3af"/><rect x="36" y="1" width="3" height="3" fill="#fc4"/><rect x="44" y="1" width="4" height="4" fill="#555"/><rect x="52" y="1" width="3" height="3" fill="#c44"/><rect x="60" y="1" width="3" height="3" fill="#38d"/><rect x="68" y="1" width="3" height="3" fill="#38d"/><rect x="76" y="1" width="3" height="3" fill="#38d"/><rect x="205" y="2" width="40" height="1" fill="#aaa"/></svg>
</body></html>
